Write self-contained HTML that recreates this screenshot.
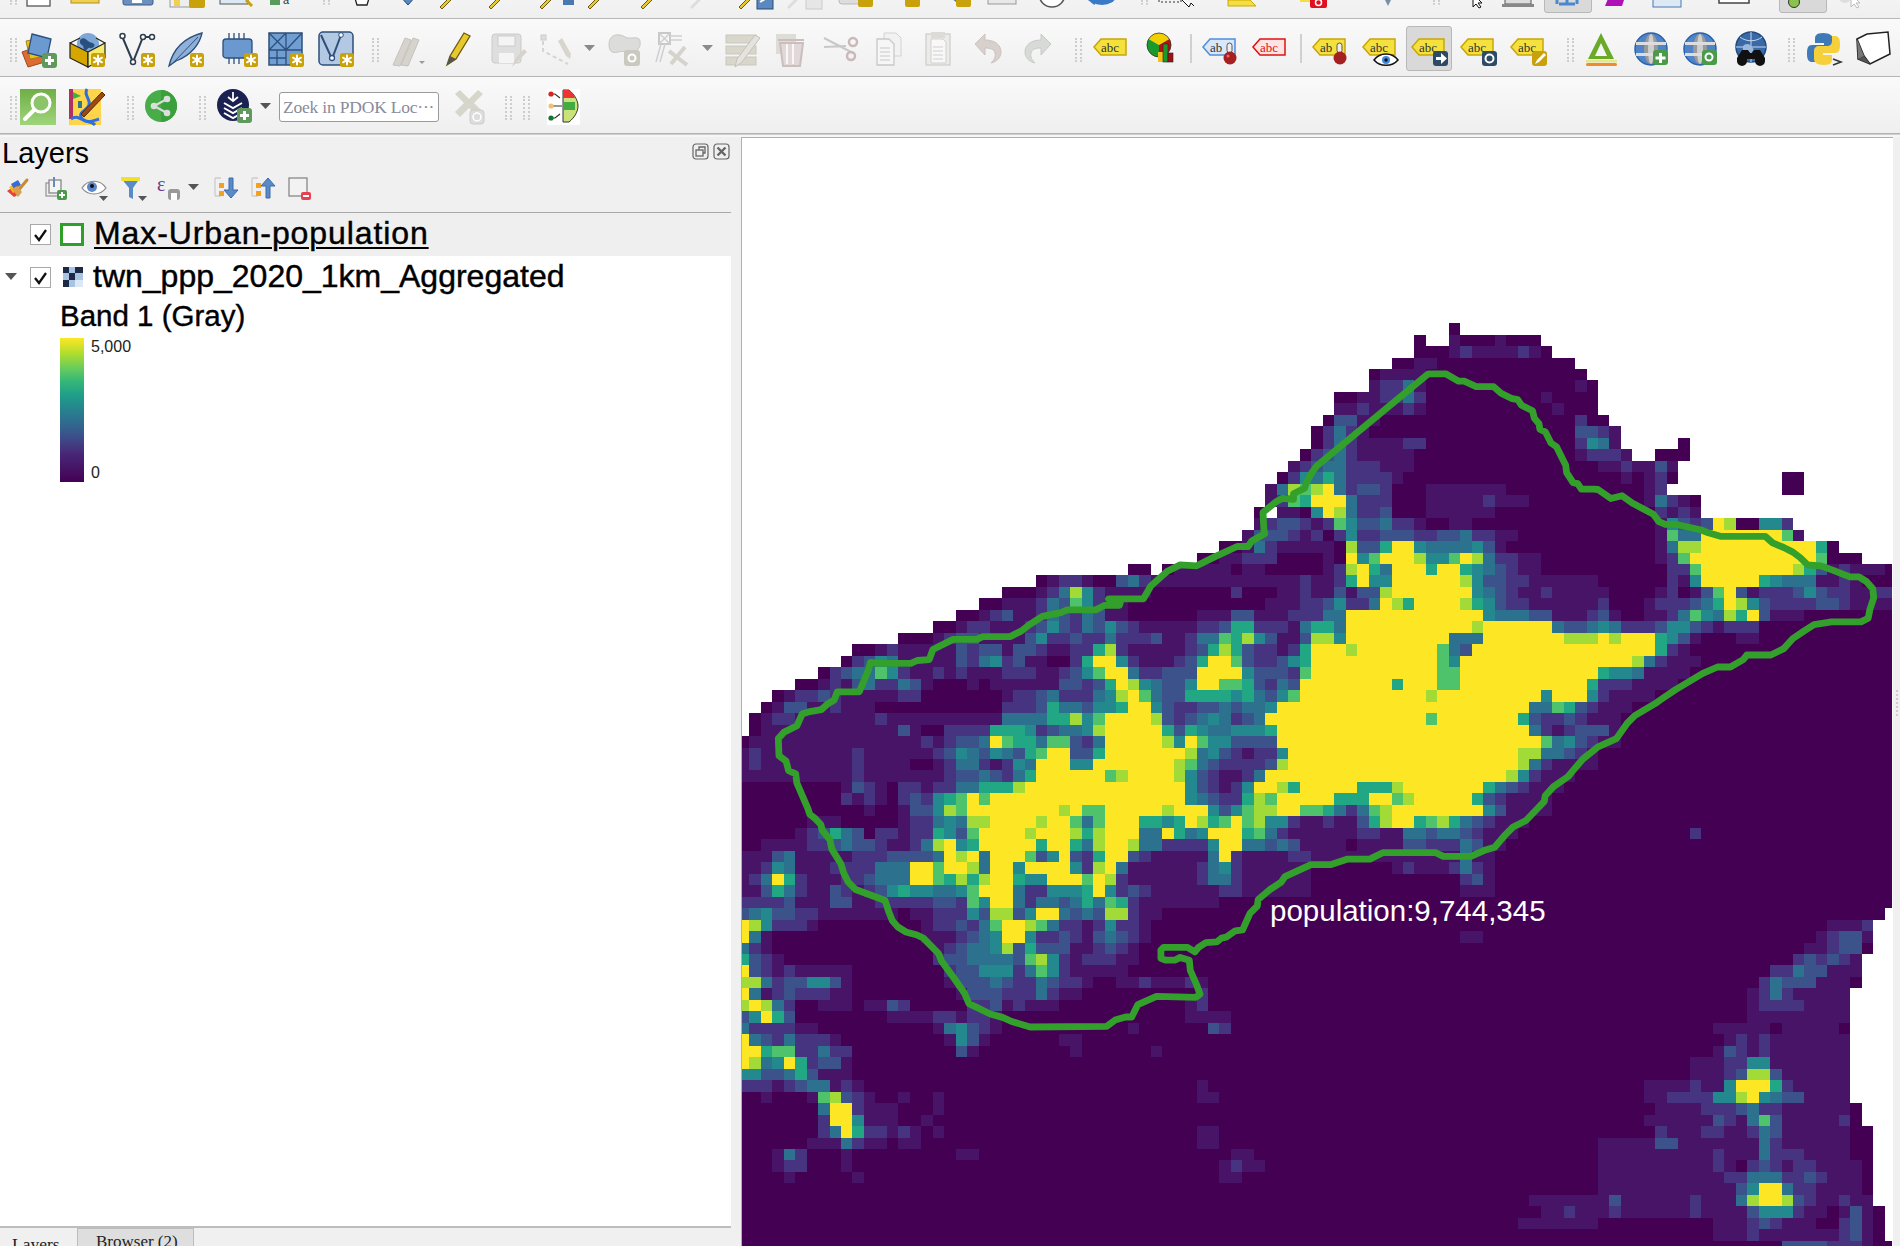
<!DOCTYPE html>
<html><head><meta charset="utf-8">
<style>
html,body{margin:0;padding:0;}
body{width:1900px;height:1246px;overflow:hidden;background:#f0f0f0;position:relative;font-family:"Liberation Sans",sans-serif;}
.abs{position:absolute;}
.tb{position:absolute;left:0;width:1900px;background:linear-gradient(#f7f7f7,#eeeeee);}
.hl{position:absolute;left:0;width:1900px;height:2px;background:#c9c9c9;}
.grip{position:absolute;width:7px;border-left:2px dotted #cdcdcd;border-right:2px dotted #cdcdcd;box-sizing:border-box;}
svg{position:absolute;overflow:visible;}
</style></head><body>
<!-- toolbars -->
<div class="tb" style="top:0;height:18px;background:linear-gradient(#f3f3f3,#efefef);"></div>
<div class="hl" style="top:18px;height:1px;background:#b8b8b8;"></div>
<div class="tb" style="top:19px;height:57px;background:linear-gradient(#fafafa,#efefef);"></div>
<div class="hl" style="top:76px;height:1px;background:#b4b4b4;"></div>
<div class="tb" style="top:77px;height:56px;background:linear-gradient(#fafafa,#efefef);"></div>
<div class="hl" style="top:133px;height:1px;background:#b2b2b2;"></div>
<div class="hl" style="top:134px;height:1px;background:#cfcfcf;"></div>
<div class="grip" style="left:10px;top:38px;height:24px;"></div>
<svg style="left:20px;top:31px" width="38" height="37" viewBox="0 0 38 37"><path d="M2 21l17-6 6 16-17 5z" fill="#dd6b32" stroke="#9a4a20" stroke-width="1"/><path d="M6 10l16-3 4 18-16 3z" fill="#f0c020" stroke="#a68410" stroke-width="1"/><path d="M12 3l19 5-4 19-19-5z" fill="#6b9ad0" stroke="#2d4f7e" stroke-width="1.3"/><g transform="translate(22,22)"><rect x="0" y="0" width="15" height="15" rx="3" fill="#5f9a5c"/><path d="M7.5 3v9M3 7.5h9" stroke="#fff" stroke-width="3"/></g></svg>
<svg style="left:69px;top:31px" width="38" height="37" viewBox="0 0 38 37"><circle cx="19" cy="13" r="11" fill="#7ea6d6"/><path d="M12 8c3-2 5 0 7 2s4 1 6 3-2 5-4 4-3 3-5 2-1-4-3-5-3-4-1-6z" fill="#27507e"/><path d="M1 12l18 9v15L1 27z" fill="#d6a600" stroke="#222" stroke-width="1.2"/><path d="M19 21l17-9v15l-17 9z" fill="#f6ec6a" stroke="#222" stroke-width="1.2"/><path d="M1 12l10-5M36 12l-9-5" stroke="#222" stroke-width="1.2"/><g transform="translate(22,22)"><rect x="0" y="0" width="14" height="14" rx="2.5" fill="#c9a10a"/><g stroke="#fff" stroke-width="2" stroke-linecap="round"><line x1="7" y1="2.5" x2="7" y2="11.5"/><line x1="3" y1="4.7" x2="11" y2="9.3"/><line x1="3" y1="9.3" x2="11" y2="4.7"/></g></g></svg>
<svg style="left:119px;top:31px" width="38" height="37" viewBox="0 0 38 37"><path d="M3 5l11 26L24 6h10" fill="none" stroke="#2e3d4f" stroke-width="2"/><circle cx="3.5" cy="5" r="2.5" fill="#fff" stroke="#2e3d4f" stroke-width="1.5"/><circle cx="14" cy="31" r="2.5" fill="#fff" stroke="#2e3d4f" stroke-width="1.5"/><circle cx="24" cy="6" r="2.5" fill="#fff" stroke="#2e3d4f" stroke-width="1.5"/><circle cx="33" cy="6" r="2.5" fill="#fff" stroke="#2e3d4f" stroke-width="1.5"/><g transform="translate(22,22)"><rect x="0" y="0" width="14" height="14" rx="2.5" fill="#c9a10a"/><g stroke="#fff" stroke-width="2" stroke-linecap="round"><line x1="7" y1="2.5" x2="7" y2="11.5"/><line x1="3" y1="4.7" x2="11" y2="9.3"/><line x1="3" y1="9.3" x2="11" y2="4.7"/></g></g></svg>
<svg style="left:168px;top:31px" width="38" height="37" viewBox="0 0 38 37"><path d="M1 35C4 22 12 8 34 2c-2 10-10 22-26 28z" fill="#8fb0d8" stroke="#2e4f7a" stroke-width="1.3"/><path d="M4 33L30 6" stroke="#2e4f7a" stroke-width="1"/><g transform="translate(22,22)"><rect x="0" y="0" width="14" height="14" rx="2.5" fill="#c9a10a"/><g stroke="#fff" stroke-width="2" stroke-linecap="round"><line x1="7" y1="2.5" x2="7" y2="11.5"/><line x1="3" y1="4.7" x2="11" y2="9.3"/><line x1="3" y1="9.3" x2="11" y2="4.7"/></g></g></svg>
<svg style="left:222px;top:31px" width="38" height="37" viewBox="0 0 38 37"><rect x="1" y="8" width="29" height="19" rx="3" fill="#6a98cf" stroke="#2e4f7a" stroke-width="1.3"/><path d="M7 2v6M12 2v6M17 2v6M22 2v6M7 27v6M12 27v6M17 27v6" stroke="#2e4f7a" stroke-width="1.3"/><g transform="translate(22,22)"><rect x="0" y="0" width="14" height="14" rx="2.5" fill="#c9a10a"/><g stroke="#fff" stroke-width="2" stroke-linecap="round"><line x1="7" y1="2.5" x2="7" y2="11.5"/><line x1="3" y1="4.7" x2="11" y2="9.3"/><line x1="3" y1="9.3" x2="11" y2="4.7"/></g></g></svg>
<svg style="left:268px;top:31px" width="38" height="37" viewBox="0 0 38 37"><rect x="1" y="2" width="33" height="32" fill="#6f9ed3" stroke="#2e4f7a" stroke-width="1.5"/><path d="M1 19h33M18 2v32M1 27h17M9 19v15M1 2l17 17M18 2L1 19M34 2L18 19" stroke="#2e4f7a" stroke-width="1.3" fill="none"/><g transform="translate(22,22)"><rect x="0" y="0" width="14" height="14" rx="2.5" fill="#c9a10a"/><g stroke="#fff" stroke-width="2" stroke-linecap="round"><line x1="7" y1="2.5" x2="7" y2="11.5"/><line x1="3" y1="4.7" x2="11" y2="9.3"/><line x1="3" y1="9.3" x2="11" y2="4.7"/></g></g></svg>
<svg style="left:318px;top:31px" width="38" height="37" viewBox="0 0 38 37"><rect x="1" y="1" width="34" height="33" rx="4" fill="#b3c8e3" stroke="#2e4f7a" stroke-width="1.5"/><path d="M3 4l11 24L23 4" fill="none" stroke="#2e4f7a" stroke-width="2"/><circle cx="14" cy="27" r="2.5" fill="#fff" stroke="#2e4f7a" stroke-width="1.3"/><circle cx="23" cy="4" r="2.3" fill="#fff" stroke="#2e4f7a"/><g transform="translate(22,22)"><rect x="0" y="0" width="14" height="14" rx="2.5" fill="#c9a10a"/><g stroke="#fff" stroke-width="2" stroke-linecap="round"><line x1="7" y1="2.5" x2="7" y2="11.5"/><line x1="3" y1="4.7" x2="11" y2="9.3"/><line x1="3" y1="9.3" x2="11" y2="4.7"/></g></g></svg>
<div class="grip" style="left:372px;top:38px;height:24px;"></div>
<svg style="left:391px;top:31px" width="40" height="37" viewBox="0 0 40 37"><path d="M2 34l12-27 6 2-11 26z" fill="#d6d2cc" stroke="#c6c2bc"/><path d="M10 34l12-27 6 2-11 26z" fill="#d6d2cc" stroke="#c6c2bc"/><path d="M28 30l6 0-3 3z" fill="#999"/></svg>
<svg style="left:445px;top:31px" width="28" height="37" viewBox="0 0 28 37"><path d="M2 34l3-9L19 2l6 3-14 23z" fill="#e6c92c" stroke="#6d5a10" stroke-width="1.3"/><path d="M2 34l3-9 6 3z" fill="#555"/></svg>
<svg style="left:491px;top:31px" width="36" height="37" viewBox="0 0 36 37"><rect x="1" y="3" width="29" height="29" rx="3" fill="#dedede" stroke="#cacaca"/><rect x="7" y="5" width="17" height="10" fill="#f4f4f4" stroke="#ccc"/><rect x="8" y="22" width="15" height="10" fill="#f4f4f4"/><path d="M21 36l3-8 9-10 3 3-10 10z" fill="#d8d2cc"/></svg>
<svg style="left:540px;top:31px" width="36" height="37" viewBox="0 0 36 37"><rect x="1" y="4" width="5" height="5" fill="#ddd" stroke="#ccc"/><path d="M3 10v10l25 13" fill="none" stroke="#d4d4d4" stroke-width="2" stroke-dasharray="4 3"/><path d="M18 10l4-3 9 16-1 5-4-3z" fill="#d8d6cc"/></svg>
<svg style="left:584px;top:44px" width="12" height="8" viewBox="0 0 12 8"><path d="M0 1h11l-5.5 6z" fill="#8a8a8a"/></svg>
<svg style="left:606px;top:31px" width="38" height="37" viewBox="0 0 38 37"><path d="M3 13c0-10 10-11 16-7 5 3 14-2 15 4s-2 9-6 11-9-2-16 0-9-2-9-8z" fill="#dcdcda" stroke="#c8c8c6"/><rect x="18" y="19" width="16" height="16" rx="3" fill="#cbc8c0"/><circle cx="26" cy="27" r="3.5" fill="none" stroke="#fff" stroke-width="2"/></svg>
<svg style="left:655px;top:31px" width="38" height="37" viewBox="0 0 38 37"><rect x="4" y="2" width="11" height="11" fill="none" stroke="#c8c8c8" stroke-width="2"/><path d="M4 2l11 11M15 2L4 13M15 5h12M15 9h12M6 13L1 31M10 13L5 31" stroke="#cfcfcf" stroke-width="1.5"/><path d="M14 20l18 14M30 16L16 33" stroke="#d6d2cc" stroke-width="4"/></svg>
<svg style="left:702px;top:44px" width="12" height="8" viewBox="0 0 12 8"><path d="M0 1h11l-5.5 6z" fill="#8a8a8a"/></svg>
<svg style="left:725px;top:31px" width="38" height="37" viewBox="0 0 38 37"><rect x="1" y="4" width="30" height="8" fill="#d9d7cc" stroke="#c9c7bc"/><rect x="1" y="15" width="30" height="8" fill="#d9d7cc" stroke="#c9c7bc"/><rect x="1" y="26" width="30" height="8" fill="#d9d7cc" stroke="#c9c7bc"/><path d="M10 36l2-8 18-24 5 3-18 24z" fill="#e6e2de" stroke="#c4c0bb"/></svg>
<svg style="left:775px;top:31px" width="32" height="37" viewBox="0 0 32 37"><rect x="1" y="3" width="20" height="20" fill="#dedcd6"/><path d="M3 9h26M5 12l3 23h17l3-23z" fill="#e2d8d8" stroke="#cbbebe" stroke-width="2"/><path d="M12 13v20M18 13v20" stroke="#fff" stroke-width="1.5"/></svg>
<svg style="left:823px;top:31px" width="36" height="37" viewBox="0 0 36 37"><path d="M1 7l29 15M1 16l22-1" stroke="#c8c8c8" stroke-width="2"/><circle cx="30" cy="11" r="4" fill="none" stroke="#cbb8b8" stroke-width="2.5"/><circle cx="28" cy="25" r="4" fill="none" stroke="#cbb8b8" stroke-width="2.5"/></svg>
<svg style="left:876px;top:31px" width="30" height="37" viewBox="0 0 30 37"><path d="M8 2h12l5 5v18H8z" fill="#f2f2f2" stroke="#d2d2d2"/><path d="M1 8h12l5 5v21H1z" fill="#f6f6f6" stroke="#c8c8c8" stroke-width="1.3"/><path d="M4 17h10M4 21h10M4 25h10M4 29h10" stroke="#c8c8c8"/></svg>
<svg style="left:925px;top:31px" width="30" height="37" viewBox="0 0 30 37"><rect x="1" y="3" width="24" height="31" fill="#ecebe8" stroke="#d0cfcb" stroke-width="1.3"/><rect x="6" y="1" width="14" height="6" fill="#dcdbd7"/><path d="M6 8h12l3 3v21H6z" fill="#f8f8f8" stroke="#d0d0d0"/><path d="M8 16h10M8 20h10M8 24h10M8 28h10" stroke="#cfcfcf"/></svg>
<svg style="left:974px;top:31px" width="30" height="37" viewBox="0 0 30 37"><path d="M1 13L11 3v6c10 0 16 5 16 12 0 6-5 10-10 11 3-3 5-6 4-10-1-4-5-5-10-5v7z" fill="#d8d0cc" stroke="#cbc3bf"/></svg>
<svg style="left:1022px;top:31px" width="30" height="37" viewBox="0 0 30 37"><path d="M29 13L19 3v6C9 9 3 14 3 21c0 6 5 10 10 11-3-3-5-6-4-10 1-4 5-5 10-5v7z" fill="#d8dad8" stroke="#c8cac8"/></svg>
<div class="grip" style="left:1075px;top:38px;height:24px;"></div>
<svg style="left:1093px;top:31px" width="36" height="37" viewBox="0 0 36 37"><g transform="translate(1,7)"><path d="M0 9L7 1h25v16H7z" fill="#f5e13c" stroke="#c9a50c" stroke-width="1.5"/><text x="7" y="14" font-family="Liberation Serif" font-size="13" fill="#333">abc</text></g></svg>
<svg style="left:1145px;top:31px" width="34" height="37" viewBox="0 0 34 37"><path d="M14 14L3.6 8A12 12 0 0 1 24.4 8z" fill="#f2d000"/><path d="M14 14L24.4 8A12 12 0 0 1 14 26z" fill="#b80f0f"/><path d="M14 14L14 26A12 12 0 0 1 3.6 8z" fill="#1a9a2a"/><circle cx="14" cy="14" r="12" fill="none" stroke="#333" stroke-width="0.8"/><rect x="13" y="21" width="5" height="10" fill="#f2c218"/><rect x="18" y="13" width="5" height="18" fill="#1a9a2a" stroke="#222" stroke-width="0.6"/><rect x="23" y="22" width="5" height="9" fill="#a0110f" stroke="#222" stroke-width="0.6"/></svg>
<div class="abs" style="left:1190px;top:34px;width:2px;height:29px;background:#d0d0d0"></div>
<svg style="left:1202px;top:31px" width="40" height="37" viewBox="0 0 40 37"><g transform="translate(1,7)"><path d="M0 9L7 1h25v16H7z" fill="#d9e7f8" stroke="#4d8fdc" stroke-width="1.5"/><text x="7" y="14" font-family="Liberation Serif" font-size="13" fill="#333">ab</text></g><rect x="25" y="12" width="5" height="10" rx="2.5" fill="#eee" stroke="#555"/><circle cx="28" cy="27" r="6.5" fill="#a52020"/><circle cx="26" cy="25" r="1.5" fill="#e66"/></svg>
<svg style="left:1252px;top:31px" width="36" height="37" viewBox="0 0 36 37"><g transform="translate(1,7)"><path d="M0 9L7 1h25v16H7z" fill="#fde3e3" stroke="#e01010" stroke-width="1.5"/><text x="7" y="14" font-family="Liberation Serif" font-size="13" fill="#e01010">abc</text></g></svg>
<div class="abs" style="left:1300px;top:34px;width:2px;height:29px;background:#d0d0d0"></div>
<svg style="left:1312px;top:31px" width="40" height="37" viewBox="0 0 40 37"><g transform="translate(1,7)"><path d="M0 9L7 1h25v16H7z" fill="#f5e13c" stroke="#c9a50c" stroke-width="1.5"/><text x="7" y="14" font-family="Liberation Serif" font-size="13" fill="#333">ab</text></g><rect x="25" y="12" width="5" height="10" rx="2.5" fill="#eee" stroke="#555"/><circle cx="28" cy="27" r="6.5" fill="#a52020"/></svg>
<svg style="left:1362px;top:31px" width="40" height="37" viewBox="0 0 40 37"><g transform="translate(1,7)"><path d="M0 9L7 1h25v16H7z" fill="#f5e13c" stroke="#c9a50c" stroke-width="1.5"/><text x="7" y="14" font-family="Liberation Serif" font-size="13" fill="#333">abc</text></g><path d="M12 29c6-8 18-8 24 0-6 7-18 7-24 0z" fill="#fff" stroke="#111" stroke-width="1.5"/><circle cx="24" cy="29" r="4" fill="#3e8be0"/><circle cx="24" cy="29" r="1.7" fill="#111"/></svg>
<div class="abs" style="left:1406px;top:26px;width:46px;height:45px;background:#d9d9d9;border:1px solid #b8b8b8;border-radius:3px;box-sizing:border-box"></div>
<svg style="left:1411px;top:31px" width="40" height="37" viewBox="0 0 40 37"><g transform="translate(1,7)"><path d="M0 9L7 1h25v16H7z" fill="#f5e13c" stroke="#c9a50c" stroke-width="1.5"/><text x="7" y="14" font-family="Liberation Serif" font-size="13" fill="#333">abc</text></g><rect x="22" y="20" width="15" height="15" rx="3" fill="#2d4b66"/><path d="M25 26h5v-4l6 5.5-6 5.5v-4h-5z" fill="#fff"/></svg>
<svg style="left:1460px;top:31px" width="40" height="37" viewBox="0 0 40 37"><g transform="translate(1,7)"><path d="M0 9L7 1h25v16H7z" fill="#f5e13c" stroke="#c9a50c" stroke-width="1.5"/><text x="7" y="14" font-family="Liberation Serif" font-size="13" fill="#333">abc</text></g><rect x="22" y="20" width="15" height="15" rx="3" fill="#2d4b66"/><circle cx="29.5" cy="27.5" r="4" fill="none" stroke="#fff" stroke-width="2"/></svg>
<svg style="left:1510px;top:31px" width="40" height="37" viewBox="0 0 40 37"><g transform="translate(1,7)"><path d="M0 9L7 1h25v16H7z" fill="#f5e13c" stroke="#c9a50c" stroke-width="1.5"/><text x="7" y="14" font-family="Liberation Serif" font-size="13" fill="#333">abc</text></g><rect x="22" y="20" width="15" height="15" rx="3" fill="#c9a10a"/><path d="M25 33l2-4 7-7 2 2-7 7z" fill="#fff"/></svg>
<div class="grip" style="left:1567px;top:38px;height:24px;"></div>
<svg style="left:1584px;top:31px" width="36" height="37" viewBox="0 0 36 37"><path d="M17 2L4 28h26z" fill="#6aaa28"/><path d="M17 12l-6 13h12z" fill="#f5f5f5"/><rect x="2" y="29" width="31" height="2.5" fill="#e4e88a"/><rect x="2" y="32" width="31" height="3" rx="1.5" fill="#ef8a30"/></svg>
<svg style="left:1633px;top:31px" width="40" height="37" viewBox="0 0 40 37"><g transform="translate(1,1)"><circle cx="17" cy="17" r="16" fill="#4f84c8" stroke="#2a62aa" stroke-width="1.5"/><ellipse cx="17" cy="17" rx="7" ry="15" fill="#9a9a9a"/><ellipse cx="17" cy="17" rx="3" ry="15" fill="#cfcfcf"/><rect x="2" y="10" width="30" height="3" fill="#ddd"/><rect x="2" y="21" width="30" height="3" fill="#ddd"/></g><rect x="20" y="19" width="15" height="15" rx="3" fill="#4a9a4a"/><path d="M27.5 22v10M22.5 27h10" stroke="#fff" stroke-width="3"/></svg>
<svg style="left:1682px;top:31px" width="40" height="37" viewBox="0 0 40 37"><g transform="translate(1,1)"><circle cx="17" cy="17" r="16" fill="#4f84c8" stroke="#2a62aa" stroke-width="1.5"/><ellipse cx="17" cy="17" rx="7" ry="15" fill="#9a9a9a"/><ellipse cx="17" cy="17" rx="3" ry="15" fill="#cfcfcf"/><rect x="2" y="10" width="30" height="3" fill="#ddd"/><rect x="2" y="21" width="30" height="3" fill="#ddd"/></g><rect x="20" y="19" width="15" height="15" rx="3" fill="#4a9a4a"/><circle cx="27" cy="26" r="3.5" fill="none" stroke="#fff" stroke-width="2"/></svg>
<svg style="left:1732px;top:31px" width="40" height="37" viewBox="0 0 40 37"><circle cx="19" cy="16" r="15" fill="#3a69a8" stroke="#1f4a80" stroke-width="1.5"/><path d="M4 16h30M19 1v30M8 6c6 5 16 5 22 0M8 26c6-5 16-5 22 0" fill="none" stroke="#c8d8ec" stroke-width="1"/><path d="M12 14c3-2 6-1 7 1s4 3 2 5-5 0-6 2-4-1-4-3-1-3 1-5z" fill="#9ab8de"/><path d="M5 27l5-8h6l2 3h2l2-3h6l5 8v3a5 5 0 0 1-10 0v-2h-8v2a5 5 0 0 1-10 0z" fill="#111"/></svg>
<div class="grip" style="left:1788px;top:38px;height:24px;"></div>
<svg style="left:1807px;top:31px" width="36" height="37" viewBox="0 0 36 37"><path d="M16 2c-7 0-8 3-8 6v4h9v2H5c-4 0-5 3-5 9s2 8 5 8h3v-5c0-3 2-5 5-5h8c3 0 5-2 5-5V8c0-3-3-6-10-6z" fill="#3f7ab8"/><path d="M17 34c7 0 8-3 8-6v-4h-9v-2h12c4 0 5-3 5-9s-2-8-5-8h-3v5c0 3-2 5-5 5h-8c-3 0-5 2-5 5v8c0 3 3 6 10 6z" fill="#f5d03a"/><path d="M26 28l8 3-8 3" fill="none" stroke="#333" stroke-width="1.5"/></svg>
<svg style="left:1856px;top:31px" width="36" height="37" viewBox="0 0 36 37"><path d="M11 3l21-2 2 22-20 10-12-5 -1-20z" fill="#fff" stroke="#222" stroke-width="1.5"/><path d="M1 8l7 17 6 8M8 25l-6 3" fill="none" stroke="#222" stroke-width="1.5"/><path d="M1 8l7 17-6 3z" fill="#777"/><path d="M8 25l6 8-12-5z" fill="#555"/></svg>
<div class="grip" style="left:10px;top:96px;height:24px;"></div>
<svg style="left:20px;top:88px" width="37" height="37" viewBox="0 0 37 37"><defs><linearGradient id="gs" x1="0" y1="0" x2="0" y2="1"><stop offset="0" stop-color="#6fae47"/><stop offset="1" stop-color="#9fd57a"/></linearGradient></defs><rect x="0" y="1" width="36" height="36" fill="url(#gs)"/><circle cx="21" cy="15" r="9" fill="#8cc46a" stroke="#fff" stroke-width="3"/><path d="M14 22L5 31" stroke="#fff" stroke-width="4" stroke-linecap="round"/></svg>
<svg style="left:69px;top:88px" width="37" height="37" viewBox="0 0 37 37"><rect x="0" y="1" width="32" height="36" fill="#fdd44a"/><path d="M0 1h4v30H0z" fill="#b03060"/><path d="M18 1c-4 6 4 10 2 16s-10 6-8 12 10 3 14 8" fill="none" stroke="#2d6ee0" stroke-width="3"/><path d="M2 31c6-4 10 0 14 2s8 0 14-2" fill="none" stroke="#2d6ee0" stroke-width="3"/><path d="M4 4l8 4-8 3z" fill="#3cb043"/><rect x="9" y="13" width="4" height="7" fill="#2a7a8a"/><path d="M12 26L33 4l3 3-21 22z" fill="#9b4a12" stroke="#5a2a05"/></svg>
<div class="grip" style="left:127px;top:96px;height:24px;"></div>
<svg style="left:145px;top:88px" width="34" height="37" viewBox="0 0 34 37"><circle cx="16" cy="18" r="16" fill="#46ad48"/><path d="M16 2a16 16 0 0 1 0 32z" fill="#3aa03c"/><circle cx="22" cy="11" r="3.3" fill="#ddd"/><circle cx="9" cy="18" r="3.3" fill="#ddd"/><circle cx="22" cy="25" r="3.3" fill="#ddd"/><path d="M22 11L9 18l13 7" fill="none" stroke="#ddd" stroke-width="2"/></svg>
<div class="grip" style="left:199px;top:96px;height:24px;"></div>
<svg style="left:217px;top:88px" width="38" height="38" viewBox="0 0 38 38"><circle cx="16" cy="17" r="16" fill="#1b2151"/><path d="M16 4v8M11 9l5 4 5-4" fill="none" stroke="#fff" stroke-width="1.8"/><path d="M7 15l9 5 9-5M7 20l9 5 9-5M7 25l9 5 9-5" fill="none" stroke="#fff" stroke-width="2"/><g transform="translate(20,20)"><rect x="0" y="0" width="15" height="15" rx="3" fill="#5f9a5c"/><path d="M7.5 3v9M3 7.5h9" stroke="#fff" stroke-width="3"/></g></svg>
<svg style="left:260px;top:102px" width="12" height="8" viewBox="0 0 12 8"><path d="M0 1h11l-5.5 6z" fill="#555"/></svg>
<div class="abs" style="left:279px;top:92px;width:160px;height:30px;background:#fff;border:1px solid #9a9a9a;border-radius:3px;box-sizing:border-box;font-family:'Liberation Serif',serif;font-size:17.5px;color:#8a8a9a;line-height:28px;padding-left:3px;letter-spacing:-0.2px;white-space:nowrap;overflow:hidden">Zoek in PDOK Loc···</div>
<svg style="left:452px;top:88px" width="34" height="37" viewBox="0 0 34 37"><path d="M3 6l5-4 9 9 9-9 5 4-9 9 9 9-5 5-9-9-9 9-5-5 9-9z" fill="#d6d6cb"/><rect x="18" y="22" width="14" height="14" rx="3" fill="#ddd" stroke="#cfcaca"/><circle cx="25" cy="29" r="4" fill="none" stroke="#fff" stroke-width="1.5"/></svg>
<div class="grip" style="left:505px;top:96px;height:24px;"></div>
<div class="grip" style="left:523px;top:96px;height:24px;"></div>
<svg style="left:547px;top:88px" width="34" height="37" viewBox="0 0 34 37"><rect x="0" y="1" width="33" height="36" fill="#fff"/><path d="M3 6h5l5 4M3 18h12M3 30h5l5-4" stroke="#333" stroke-width="1.2" fill="none"/><circle cx="4" cy="6" r="2.6" fill="#d22"/><circle cx="4" cy="18" r="2.6" fill="#f4c070"/><circle cx="4" cy="30" r="2.6" fill="#173"/><path d="M16 2h6c5 4 9 10 9 16s-4 12-9 16h-6z" fill="#c9e27a" stroke="#333"/><path d="M16 2h6c3 2 5 5 6 8H16z" fill="#e33"/><path d="M16 14h12v8H16z" fill="#4a4"/></svg>
<div class="grip" style="left:10px;top:0px;height:5px;"></div>
<svg style="left:26px;top:0px" width="26" height="18" viewBox="0 0 26 18"><rect x="1" y="-6" width="23" height="12" fill="#fff" stroke="#555" stroke-width="1.3"/></svg>
<svg style="left:70px;top:0px" width="30" height="18" viewBox="0 0 30 18"><rect x="1" y="-6" width="28" height="9" fill="#f0d050" stroke="#b09020"/></svg>
<svg style="left:122px;top:0px" width="32" height="18" viewBox="0 0 32 18"><rect x="1" y="-8" width="30" height="13" rx="2" fill="#6b90c0" stroke="#3a5a88"/><rect x="10" y="-2" width="10" height="5" fill="#fff"/></svg>
<svg style="left:170px;top:0px" width="36" height="18" viewBox="0 0 36 18"><rect x="0" y="-6" width="24" height="13" fill="#eee" stroke="#999"/><rect x="4" y="-2" width="6" height="8" fill="#f0d050"/><rect x="19" y="-3" width="16" height="11" rx="2" fill="#c9a10a"/></svg>
<svg style="left:220px;top:0px" width="34" height="18" viewBox="0 0 34 18"><rect x="0" y="-6" width="28" height="10" fill="#dde8f5" stroke="#555"/><path d="M26 0l6 6" stroke="#c9a10a" stroke-width="3"/></svg>
<svg style="left:269px;top:0px" width="30" height="18" viewBox="0 0 30 18"><rect x="1" y="-6" width="10" height="11" fill="#5a9a5a"/><text x="14" y="4" font-size="11" font-family="Liberation Sans" fill="#333">a</text></svg>
<div class="grip" style="left:323px;top:0px;height:5px;"></div>
<svg style="left:352px;top:0px" width="20" height="18" viewBox="0 0 20 18"><path d="M2-5h16l-3 10H5z" fill="#fff" stroke="#222" stroke-width="1.3"/></svg>
<svg style="left:399px;top:0px" width="20" height="18" viewBox="0 0 20 18"><path d="M1-4l8 9 8-9z" fill="#5a88c0" stroke="#2a4a70"/></svg>
<svg style="left:439px;top:0px" width="16" height="18" viewBox="0 0 16 18"><path d="M1 7L13-5l2 2L3 9z" fill="#e6c92c" stroke="#6d5a10"/></svg>
<svg style="left:488px;top:0px" width="16" height="18" viewBox="0 0 16 18"><path d="M1 7L13-5l2 2L3 9z" fill="#e6c92c" stroke="#6d5a10"/></svg>
<svg style="left:539px;top:0px" width="16" height="18" viewBox="0 0 16 18"><path d="M1 7L13-5l2 2L3 9z" fill="#e6c92c" stroke="#6d5a10"/></svg>
<svg style="left:587px;top:0px" width="16" height="18" viewBox="0 0 16 18"><path d="M1 7L13-5l2 2L3 9z" fill="#e6c92c" stroke="#6d5a10"/></svg>
<svg style="left:640px;top:0px" width="16" height="18" viewBox="0 0 16 18"><path d="M1 7L13-5l2 2L3 9z" fill="#e6c92c" stroke="#6d5a10"/></svg>
<svg style="left:738px;top:0px" width="16" height="18" viewBox="0 0 16 18"><path d="M1 7L13-5l2 2L3 9z" fill="#e6c92c" stroke="#6d5a10"/></svg>
<svg style="left:562px;top:0px" width="14" height="18" viewBox="0 0 14 18"><rect x="1" y="-6" width="11" height="11" fill="#4a78b0"/></svg>
<svg style="left:689px;top:0px" width="14" height="18" viewBox="0 0 14 18"><path d="M1 7L12-4l2 2L3 9z" fill="#ddd"/></svg>
<svg style="left:756px;top:0px" width="18" height="18" viewBox="0 0 18 18"><rect x="1" y="-6" width="16" height="15" fill="#5a88c0" stroke="#2a4a70"/><path d="M4 2l10-6" stroke="#fff" stroke-width="2"/></svg>
<svg style="left:786px;top:0px" width="14" height="18" viewBox="0 0 14 18"><path d="M1 7L12-4l2 2L3 9z" fill="#ddd"/></svg>
<svg style="left:805px;top:0px" width="18" height="18" viewBox="0 0 18 18"><rect x="1" y="-6" width="16" height="15" fill="#e6e6e6" stroke="#ccc"/></svg>
<svg style="left:839px;top:0px" width="34" height="18" viewBox="0 0 34 18"><rect x="0" y="-8" width="26" height="12" rx="3" fill="#ddd" stroke="#bbb"/><rect x="19" y="-3" width="15" height="10" rx="2" fill="#c9a10a"/></svg>
<svg style="left:904px;top:0px" width="18" height="18" viewBox="0 0 18 18"><rect x="1" y="-3" width="15" height="10" rx="2" fill="#c9a10a"/></svg>
<svg style="left:946px;top:0px" width="26" height="18" viewBox="0 0 26 18"><path d="M0-6l10 8 6-6z" fill="#4a78b0"/><rect x="10" y="-3" width="15" height="10" rx="2" fill="#c9a10a"/></svg>
<svg style="left:987px;top:0px" width="30" height="18" viewBox="0 0 30 18"><rect x="1" y="-8" width="28" height="12" fill="#e8e8e8" stroke="#999"/></svg>
<svg style="left:1037px;top:0px" width="30" height="18" viewBox="0 0 30 18"><circle cx="15" cy="-6" r="13" fill="#fff" stroke="#555" stroke-width="1.5"/></svg>
<svg style="left:1084px;top:0px" width="32" height="18" viewBox="0 0 32 18"><ellipse cx="18" cy="-4" rx="14" ry="9" fill="#3a78c8"/><path d="M1-2c4 0 6 4 10 6" stroke="#3a78c8" stroke-width="2" fill="none"/></svg>
<div class="grip" style="left:1141px;top:0px;height:5px;"></div>
<svg style="left:1158px;top:0px" width="36" height="18" viewBox="0 0 36 18"><rect x="1" y="-6" width="22" height="8" fill="none" stroke="#333" stroke-dasharray="2 2"/><path d="M21-3l10 10 2-4 3 3" fill="#fff" stroke="#111"/></svg>
<svg style="left:1228px;top:0px" width="30" height="18" viewBox="0 0 30 18"><path d="M0 0h22l6 6H0z" fill="#f4de40" stroke="#c9a50c"/></svg>
<svg style="left:1300px;top:0px" width="30" height="18" viewBox="0 0 30 18"><rect x="0" y="-4" width="14" height="6" fill="#f4de40"/><rect x="10" y="-3" width="17" height="11" rx="2" fill="#e01020"/><circle cx="18.5" cy="2.5" r="3" fill="none" stroke="#fff" stroke-width="1.5"/></svg>
<svg style="left:1383px;top:0px" width="12" height="18" viewBox="0 0 12 18"><path d="M0-4h10l-5 10z" fill="#7a90a8"/></svg>
<div class="grip" style="left:1433px;top:0px;height:5px;"></div>
<svg style="left:1472px;top:0px" width="16" height="18" viewBox="0 0 16 18"><path d="M1-6l9 9-4 0 3 4-2 1-3-4-3 3z" fill="#fff" stroke="#111"/></svg>
<svg style="left:1502px;top:0px" width="32" height="18" viewBox="0 0 32 18"><rect x="3" y="-6" width="26" height="10" fill="#ddd" stroke="#555"/><rect x="0" y="4" width="32" height="3" fill="#888"/></svg>
<div class="abs" style="left:1544px;top:-4px;width:48px;height:17px;background:#d9d9d9;border:1px solid #b8b8b8;border-radius:3px;box-sizing:border-box"></div>
<svg style="left:1553px;top:0px" width="28" height="18" viewBox="0 0 28 18"><path d="M4-2v6M14-2v6M24-2v6M6 4h16" stroke="#4a88d0" stroke-width="3"/></svg>
<svg style="left:1605px;top:0px" width="22" height="18" viewBox="0 0 22 18"><path d="M5-6h16l-4 12H0z" fill="#b010b8"/></svg>
<svg style="left:1652px;top:0px" width="30" height="18" viewBox="0 0 30 18"><rect x="1" y="-6" width="28" height="13" fill="#dde8f5" stroke="#4a78b0"/></svg>
<svg style="left:1718px;top:0px" width="32" height="18" viewBox="0 0 32 18"><rect x="1" y="-6" width="30" height="9" fill="#fff" stroke="#444" stroke-width="1.5"/></svg>
<div class="abs" style="left:1779px;top:-4px;width:48px;height:17px;background:#d9d9d9;border:1px solid #b8b8b8;border-radius:3px;box-sizing:border-box"></div>
<svg style="left:1787px;top:0px" width="14" height="18" viewBox="0 0 14 18"><circle cx="7" cy="2" r="5.5" fill="#8bc34a" stroke="#333"/></svg>
<svg style="left:1839px;top:0px" width="28" height="18" viewBox="0 0 28 18"><circle cx="6" cy="-3" r="6" fill="#ddd"/><path d="M12-6l9 9-4 0 3 4-2 1-3-4-3 3z" fill="#fff" stroke="#bbb"/></svg>
<!-- layers panel -->
<div class="abs" style="left:0;top:135px;width:741px;height:1111px;background:#f0f0f0;"></div><div class="abs" style="left:0;top:135px;width:1900px;height:2px;background:#f6f6f6;"></div>
<div class="abs" style="left:2px;top:133px;font-size:29px;color:#000;line-height:40px;">Layers</div>
<svg style="left:692px;top:143px" width="17" height="17" viewBox="0 0 17 17"><rect x="1" y="1" width="15" height="15" rx="3" fill="none" stroke="#666" stroke-width="1.2"/><rect x="4" y="7" width="7" height="6" fill="none" stroke="#666" stroke-width="1.3"/><path d="M7 7V4h6v6h-2" fill="none" stroke="#666" stroke-width="1.3"/></svg>
<svg style="left:713px;top:143px" width="17" height="17" viewBox="0 0 17 17"><rect x="1" y="1" width="15" height="15" rx="3" fill="none" stroke="#666" stroke-width="1.2"/><path d="M4.5 4.5l8 8M12.5 4.5l-8 8" stroke="#666" stroke-width="2.4"/></svg>
<svg style="left:6px;top:176px" width="24" height="24" viewBox="0 0 24 24"><path d="M1 15l9-6 5 8-7 4z" fill="#e8403a"/><path d="M3 11l8-5 4 6-8 5z" fill="#f4c020"/><path d="M5 8l7-4 3 5-7 4z" fill="#3a6ad8"/><path d="M11 16l10-12" stroke="#c98a30" stroke-width="3" stroke-linecap="round"/><path d="M6 13l6 8 4-5-5-6z" fill="#d9a050"/></svg>
<svg style="left:44px;top:176px" width="25" height="25" viewBox="0 0 25 25"><rect x="2" y="7" width="12" height="13" fill="none" stroke="#999" stroke-width="1.3"/><rect x="5" y="4" width="12" height="13" fill="#f4f4f4" stroke="#888" stroke-width="1.3"/><path d="M10 1v10" stroke="#6a8ab8" stroke-width="2"/><rect x="13" y="14" width="10" height="10" rx="2" fill="#4a9a4a"/><path d="M18 16v6M15 19h6" stroke="#fff" stroke-width="2"/></svg>
<svg style="left:81px;top:176px" width="28" height="26" viewBox="0 0 28 26"><path d="M1 12c6-9 18-9 24 0-6 8-18 8-24 0z" fill="#fff" stroke="#888" stroke-width="1.2"/><circle cx="11" cy="11" r="5" fill="#5a88c8"/><circle cx="11" cy="10" r="2" fill="#111"/><path d="M18 20h9l-4.5 5z" fill="#555"/></svg>
<svg style="left:120px;top:176px" width="28" height="26" viewBox="0 0 28 26"><path d="M1 2h19l-7 10v11l-4-2v-9z" fill="#5a8ac8"/><rect x="1" y="1" width="19" height="4" fill="#f0e030"/><path d="M18 20h9l-4.5 5z" fill="#555"/></svg>
<svg style="left:157px;top:176px" width="26" height="25" viewBox="0 0 26 25"><text x="0" y="15" font-family="Liberation Serif" font-size="20" fill="#6a3a8a">&#949;</text><rect x="11" y="13" width="12" height="11" rx="3" fill="#999"/><rect x="14" y="17" width="6" height="7" fill="#fff"/></svg>
<svg style="left:188px;top:183px" width="12" height="8" viewBox="0 0 12 8"><path d="M0 1h11l-5.5 6z" fill="#555"/></svg>
<svg style="left:213px;top:176px" width="24" height="24" viewBox="0 0 24 24"><path d="M2 2h6M2 2v18M2 20h6" stroke="#ccc" stroke-width="1.3" fill="none"/><rect x="6" y="7" width="5" height="5" fill="#f4a020"/><rect x="6" y="15" width="5" height="5" fill="#f4a020"/><path d="M16 2v12h-5l7 8 7-8h-5V2z" fill="#5a8ac8" stroke="#3a6aa8"/></svg>
<svg style="left:250px;top:176px" width="24" height="24" viewBox="0 0 24 24"><path d="M2 2h6M2 2v18M2 20h6" stroke="#ccc" stroke-width="1.3" fill="none"/><rect x="6" y="7" width="5" height="5" fill="#f4a020"/><rect x="6" y="15" width="5" height="5" fill="#f4a020"/><path d="M16 22V10h-5l7-8 7 8h-5v12z" fill="#5a8ac8" stroke="#3a6aa8"/></svg>
<svg style="left:288px;top:176px" width="24" height="25" viewBox="0 0 24 25"><rect x="1" y="2" width="18" height="18" fill="#f2f2f2" stroke="#888" stroke-width="1.3"/><rect x="13" y="16" width="10" height="8" rx="2" fill="#e84050"/><path d="M15 20h6" stroke="#fff" stroke-width="2"/></svg>
<div class="abs" style="left:0;top:212px;width:731px;height:1px;background:#a8a8a8;"></div>
<div class="abs" style="left:0;top:213px;width:731px;height:43px;background:#efefef;"></div>
<div class="abs" style="left:0;top:256px;width:731px;height:971px;background:#fff;"></div>
<div class="abs" style="left:0;top:1226px;width:731px;height:2px;background:#bdbdbd;"></div>
<div class="abs" style="left:30px;top:224px;width:21px;height:21px;background:#fff;border:1.5px solid #a8a8a8;box-sizing:border-box"></div>
<svg style="left:30px;top:224px" width="21" height="21" viewBox="0 0 21 21"><path d="M5 11l4 5 7-10" fill="none" stroke="#111" stroke-width="2.3"/></svg>
<div class="abs" style="left:60px;top:223px;width:24px;height:23px;border:3px solid #2ea02a;box-sizing:border-box;background:#fff"></div>
<div class="abs" style="left:94px;top:213px;font-size:32px;letter-spacing:0.9px;line-height:40px;color:#000;white-space:nowrap;-webkit-text-stroke:0.45px #000;text-decoration:underline;text-decoration-thickness:2px;text-underline-offset:3px">Max-Urban-population</div>
<svg style="left:4px;top:272px" width="14" height="9" viewBox="0 0 14 9"><path d="M1 1h12l-6 7z" fill="#555"/></svg>
<div class="abs" style="left:30px;top:267px;width:21px;height:21px;background:#fff;border:1.5px solid #a8a8a8;box-sizing:border-box"></div>
<svg style="left:30px;top:267px" width="21" height="21" viewBox="0 0 21 21"><path d="M5 11l4 5 7-10" fill="none" stroke="#111" stroke-width="2.3"/></svg>
<svg style="left:63px;top:267px" width="20" height="20" viewBox="0 0 20 20"><rect x="0" y="0" width="20" height="20" fill="#a8c4e4"/><rect x="0" y="0" width="6" height="6" fill="#1e2a44"/><rect x="12" y="0" width="8" height="6" fill="#1e2a44"/><rect x="6" y="6" width="6" height="7" fill="#1e2a44"/><rect x="0" y="13" width="6" height="7" fill="#1e2a44"/><rect x="12" y="13" width="8" height="7" fill="#dce8f4"/></svg>
<div class="abs" style="left:93px;top:256px;font-size:32px;line-height:40px;color:#000;white-space:nowrap;-webkit-text-stroke:0.45px #000">twn_ppp_2020_1km_Aggregated</div>
<div class="abs" style="left:60px;top:298px;font-size:29.5px;line-height:36px;color:#000;white-space:nowrap;-webkit-text-stroke:0.4px #000">Band 1 (Gray)</div>
<div class="abs" style="left:60px;top:338px;width:24px;height:144px;background:linear-gradient(#fde725,#b5de2b 10%,#6ece58 20%,#35b779 30%,#1f9e89 40%,#26828e 50%,#31688e 60%,#3e4a89 70%,#482878 80%,#440154)"></div>
<div class="abs" style="left:91px;top:337px;font-size:16px;line-height:20px;color:#222;white-space:nowrap">5,000</div>
<div class="abs" style="left:91px;top:463px;font-size:16px;line-height:20px;color:#222;white-space:nowrap">0</div>
<div class="abs" style="left:0;top:1228px;width:741px;height:18px;background:#f0f0f0"></div>
<div class="abs" style="left:77px;top:1228px;width:117px;height:20px;background:#dedede;border:1px solid #bdbdbd;box-sizing:border-box"></div>
<div class="abs" style="left:12px;top:1233px;font-family:'Liberation Serif',serif;font-size:17.5px;line-height:22px;color:#222;white-space:nowrap">Layers</div>
<div class="abs" style="left:96px;top:1231px;font-family:'Liberation Serif',serif;font-size:17px;line-height:22px;color:#222;white-space:nowrap">Browser (2)</div>
<!-- map -->
<div class="abs" style="left:741px;top:137px;width:1152px;height:1109px;background:#b0b0b0;"></div>
<div class="abs" style="left:1892px;top:138px;width:1px;height:1108px;background:#fff;"></div>
<div class="grip" style="left:1896px;top:690px;height:26px;width:4px;border-right:none"></div>
<div class="abs" style="left:742px;top:138px;width:1150px;height:1108px;background:#fff;overflow:hidden;">
<svg width="1150" height="1108" viewBox="742 138 1150 1108" style="left:0;top:0" shape-rendering="crispEdges"><path fill="#440154" d="M1448.8 323.1H1460.3V334.6H1448.8zM1414.4 334.6H1425.9V346.0H1414.4zM1448.8 334.6H1540.6V346.0H1448.8zM1414.4 346.0H1552.1V357.5H1414.4zM1391.5 357.5H1575.0V369.0H1391.5zM1368.6 369.0H1586.5V380.4H1368.6zM1368.6 380.4H1598.0V391.9H1368.6zM1334.1 391.9H1598.0V403.4H1334.1zM1334.1 403.4H1598.0V414.9H1334.1zM1322.7 414.9H1609.4V426.3H1322.7zM1311.2 426.3H1620.9V437.8H1311.2zM1311.2 437.8H1620.9V449.3H1311.2zM1678.2 437.8H1689.7V449.3H1678.2zM1299.7 449.3H1632.4V460.7H1299.7zM1655.3 449.3H1689.7V460.7H1655.3zM1288.3 460.7H1678.2V472.2H1288.3zM1276.8 472.2H1678.2V483.7H1276.8zM1781.5 472.2H1804.4V483.7H1781.5zM1265.3 483.7H1666.8V495.1H1265.3zM1781.5 483.7H1804.4V495.1H1781.5zM1265.3 495.1H1701.2V506.6H1265.3zM1253.8 506.6H1265.3V518.1H1253.8zM1276.8 506.6H1701.2V518.1H1276.8zM1253.8 518.1H1792.9V529.6H1253.8zM1242.4 529.6H1804.4V541.0H1242.4zM1219.4 541.0H1838.8V552.5H1219.4zM1196.5 552.5H1861.8V564.0H1196.5zM1127.7 564.0H1150.6V575.4H1127.7zM1162.1 564.0H1896.2V575.4H1162.1zM1035.9 575.4H1896.2V586.9H1035.9zM1001.5 586.9H1896.2V598.4H1001.5zM978.6 598.4H1896.2V609.8H978.6zM955.6 609.8H1896.2V621.3H955.6zM932.7 621.3H1896.2V632.8H932.7zM898.3 632.8H1896.2V644.2H898.3zM852.4 644.2H1896.2V655.7H852.4zM840.9 655.7H1896.2V667.2H840.9zM818.0 667.2H1896.2V678.7H818.0zM795.1 678.7H1896.2V690.1H795.1zM772.1 690.1H1896.2V701.6H772.1zM760.6 701.6H1896.2V713.1H760.6zM749.2 713.1H1896.2V724.5H749.2zM749.2 724.5H1896.2V736.0H749.2zM737.7 736.0H1896.2V747.5H737.7zM737.7 747.5H1896.2V759.0H737.7zM737.7 759.0H1896.2V770.4H737.7zM737.7 770.4H1896.2V781.9H737.7zM737.7 781.9H1896.2V793.4H737.7zM737.7 793.4H1896.2V804.8H737.7zM737.7 804.8H1896.2V816.3H737.7zM737.7 816.3H1896.2V827.8H737.7zM737.7 827.8H1896.2V839.2H737.7zM737.7 839.2H1896.2V850.7H737.7zM737.7 850.7H1896.2V862.2H737.7zM737.7 862.2H1896.2V873.7H737.7zM737.7 873.7H1896.2V885.1H737.7zM737.7 885.1H1896.2V896.6H737.7zM737.7 896.6H1896.2V908.1H737.7zM737.7 908.1H1884.7V919.5H737.7zM737.7 919.5H1873.2V931.0H737.7zM737.7 931.0H1873.2V942.5H737.7zM737.7 942.5H1873.2V953.9H737.7zM737.7 953.9H1861.8V965.4H737.7zM737.7 965.4H1861.8V976.9H737.7zM737.7 976.9H1861.8V988.4H737.7zM737.7 988.4H1850.3V999.8H737.7zM737.7 999.8H1850.3V1011.3H737.7zM737.7 1011.3H1850.3V1022.8H737.7zM737.7 1022.8H1850.3V1034.2H737.7zM737.7 1034.2H1850.3V1045.7H737.7zM737.7 1045.7H1850.3V1057.2H737.7zM737.7 1057.2H1850.3V1068.6H737.7zM737.7 1068.6H1850.3V1080.1H737.7zM737.7 1080.1H1850.3V1091.6H737.7zM737.7 1091.6H1850.3V1103.0H737.7zM737.7 1103.0H1861.8V1114.5H737.7zM737.7 1114.5H1861.8V1126.0H737.7zM737.7 1126.0H1873.2V1137.5H737.7zM737.7 1137.5H1873.2V1148.9H737.7zM737.7 1148.9H1873.2V1160.4H737.7zM737.7 1160.4H1873.2V1171.9H737.7zM737.7 1171.9H1873.2V1183.3H737.7zM737.7 1183.3H1873.2V1194.8H737.7zM737.7 1194.8H1873.2V1206.3H737.7zM737.7 1206.3H1884.7V1217.8H737.7zM737.7 1217.8H1884.7V1229.2H737.7zM737.7 1229.2H1884.7V1240.7H737.7zM737.7 1240.7H1896.2V1252.2H737.7z"/><path fill="#481467" d="M1448.8 334.6H1460.3V346.0H1448.8zM1494.7 334.6H1506.2V346.0H1494.7zM1448.8 346.0H1460.3V357.5H1448.8zM1471.8 346.0H1517.7V357.5H1471.8zM1529.1 346.0H1540.6V357.5H1529.1zM1414.4 357.5H1437.4V369.0H1414.4zM1380.0 369.0H1425.9V380.4H1380.0zM1368.6 380.4H1380.0V391.9H1368.6zM1414.4 380.4H1425.9V391.9H1414.4zM1575.0 380.4H1586.5V391.9H1575.0zM1357.1 391.9H1380.0V403.4H1357.1zM1540.6 391.9H1552.1V403.4H1540.6zM1334.1 403.4H1357.1V414.9H1334.1zM1368.6 403.4H1403.0V414.9H1368.6zM1414.4 403.4H1425.9V414.9H1414.4zM1552.1 403.4H1563.5V414.9H1552.1zM1357.1 414.9H1380.0V426.3H1357.1zM1357.1 426.3H1368.6V437.8H1357.1zM1609.4 426.3H1620.9V437.8H1609.4zM1357.1 437.8H1403.0V449.3H1357.1zM1609.4 437.8H1620.9V449.3H1609.4zM1357.1 449.3H1414.4V460.7H1357.1zM1575.0 449.3H1586.5V460.7H1575.0zM1620.9 449.3H1632.4V460.7H1620.9zM1288.3 460.7H1299.7V472.2H1288.3zM1380.0 460.7H1414.4V472.2H1380.0zM1598.0 460.7H1620.9V472.2H1598.0zM1632.4 460.7H1655.3V472.2H1632.4zM1666.8 460.7H1678.2V472.2H1666.8zM1391.5 472.2H1403.0V483.7H1391.5zM1620.9 472.2H1632.4V483.7H1620.9zM1643.8 472.2H1655.3V483.7H1643.8zM1265.3 483.7H1276.8V495.1H1265.3zM1425.9 483.7H1506.2V495.1H1425.9zM1643.8 483.7H1655.3V495.1H1643.8zM1265.3 495.1H1276.8V506.6H1265.3zM1425.9 495.1H1483.2V506.6H1425.9zM1494.7 495.1H1529.1V506.6H1494.7zM1643.8 495.1H1655.3V506.6H1643.8zM1678.2 495.1H1689.7V506.6H1678.2zM1276.8 506.6H1299.7V518.1H1276.8zM1425.9 506.6H1494.7V518.1H1425.9zM1666.8 506.6H1678.2V518.1H1666.8zM1689.7 506.6H1701.2V518.1H1689.7zM1253.8 518.1H1265.3V529.6H1253.8zM1311.2 518.1H1322.7V529.6H1311.2zM1414.4 518.1H1425.9V529.6H1414.4zM1448.8 518.1H1471.8V529.6H1448.8zM1655.3 518.1H1666.8V529.6H1655.3zM1242.4 529.6H1253.8V541.0H1242.4zM1299.7 529.6H1311.2V541.0H1299.7zM1494.7 529.6H1517.7V541.0H1494.7zM1655.3 529.6H1666.8V541.0H1655.3zM1792.9 529.6H1804.4V541.0H1792.9zM1242.4 541.0H1253.8V552.5H1242.4zM1276.8 541.0H1334.1V552.5H1276.8zM1494.7 541.0H1506.2V552.5H1494.7zM1655.3 541.0H1666.8V552.5H1655.3zM1219.4 552.5H1242.4V564.0H1219.4zM1322.7 552.5H1334.1V564.0H1322.7zM1517.7 552.5H1540.6V564.0H1517.7zM1655.3 552.5H1666.8V564.0H1655.3zM1173.6 564.0H1230.9V575.4H1173.6zM1242.4 564.0H1265.3V575.4H1242.4zM1322.7 564.0H1334.1V575.4H1322.7zM1517.7 564.0H1540.6V575.4H1517.7zM1827.4 564.0H1838.8V575.4H1827.4zM1850.3 564.0H1884.7V575.4H1850.3zM1047.4 575.4H1058.9V586.9H1047.4zM1081.8 575.4H1093.3V586.9H1081.8zM1150.6 575.4H1299.7V586.9H1150.6zM1311.2 575.4H1334.1V586.9H1311.2zM1529.1 575.4H1598.0V586.9H1529.1zM1678.2 575.4H1689.7V586.9H1678.2zM1815.9 575.4H1838.8V586.9H1815.9zM1850.3 575.4H1861.8V586.9H1850.3zM1035.9 586.9H1047.4V598.4H1035.9zM1104.7 586.9H1150.6V598.4H1104.7zM1276.8 586.9H1299.7V598.4H1276.8zM1311.2 586.9H1334.1V598.4H1311.2zM1345.6 586.9H1357.1V598.4H1345.6zM1517.7 586.9H1540.6V598.4H1517.7zM1552.1 586.9H1609.4V598.4H1552.1zM1655.3 586.9H1666.8V598.4H1655.3zM1689.7 586.9H1701.2V598.4H1689.7zM1747.1 586.9H1758.5V598.4H1747.1zM1850.3 586.9H1873.2V598.4H1850.3zM1001.5 598.4H1035.9V609.8H1001.5zM1104.7 598.4H1127.7V609.8H1104.7zM1265.3 598.4H1299.7V609.8H1265.3zM1529.1 598.4H1598.0V609.8H1529.1zM1643.8 598.4H1655.3V609.8H1643.8zM1850.3 598.4H1896.2V609.8H1850.3zM978.6 609.8H990.0V621.3H978.6zM1013.0 609.8H1035.9V621.3H1013.0zM1104.7 609.8H1127.7V621.3H1104.7zM1196.5 609.8H1230.9V621.3H1196.5zM1253.8 609.8H1288.3V621.3H1253.8zM1552.1 609.8H1586.5V621.3H1552.1zM1609.4 609.8H1620.9V621.3H1609.4zM1643.8 609.8H1666.8V621.3H1643.8zM1770.0 609.8H1804.4V621.3H1770.0zM955.6 621.3H967.1V632.8H955.6zM990.0 621.3H1024.5V632.8H990.0zM1139.2 621.3H1196.5V632.8H1139.2zM1288.3 621.3H1299.7V632.8H1288.3zM1712.7 621.3H1724.1V632.8H1712.7zM932.7 632.8H944.2V644.2H932.7zM978.6 632.8H1024.5V644.2H978.6zM1162.1 632.8H1185.0V644.2H1162.1zM1276.8 632.8H1299.7V644.2H1276.8zM1689.7 632.8H1701.2V644.2H1689.7zM1735.6 632.8H1758.5V644.2H1735.6zM875.3 644.2H886.8V655.7H875.3zM898.3 644.2H955.6V655.7H898.3zM1001.5 644.2H1013.0V655.7H1001.5zM1047.4 644.2H1070.3V655.7H1047.4zM1127.7 644.2H1185.0V655.7H1127.7zM1276.8 644.2H1288.3V655.7H1276.8zM1678.2 644.2H1689.7V655.7H1678.2zM898.3 655.7H955.6V667.2H898.3zM1024.5 655.7H1047.4V667.2H1024.5zM1139.2 655.7H1173.6V667.2H1139.2zM1666.8 655.7H1701.2V667.2H1666.8zM909.8 667.2H932.7V678.7H909.8zM944.2 667.2H955.6V678.7H944.2zM967.1 667.2H1001.5V678.7H967.1zM1035.9 667.2H1058.9V678.7H1035.9zM1643.8 667.2H1689.7V678.7H1643.8zM818.0 678.7H829.5V690.1H818.0zM840.9 678.7H852.4V690.1H840.9zM921.2 678.7H932.7V690.1H921.2zM967.1 678.7H978.6V690.1H967.1zM990.0 678.7H1058.9V690.1H990.0zM1632.4 678.7H1678.2V690.1H1632.4zM783.6 690.1H795.1V701.6H783.6zM840.9 690.1H898.3V701.6H840.9zM1001.5 690.1H1013.0V701.6H1001.5zM1609.4 690.1H1655.3V701.6H1609.4zM772.1 701.6H783.6V713.1H772.1zM806.5 701.6H829.5V713.1H806.5zM840.9 701.6H875.3V713.1H840.9zM1598.0 701.6H1632.4V713.1H1598.0zM760.6 713.1H772.1V724.5H760.6zM795.1 713.1H875.3V724.5H795.1zM886.8 713.1H1001.5V724.5H886.8zM1586.5 713.1H1620.9V724.5H1586.5zM760.6 724.5H898.3V736.0H760.6zM909.8 724.5H921.2V736.0H909.8zM1552.1 724.5H1563.5V736.0H1552.1zM1609.4 724.5H1620.9V736.0H1609.4zM749.2 736.0H921.2V747.5H749.2zM932.7 736.0H944.2V747.5H932.7zM1598.0 736.0H1620.9V747.5H1598.0zM737.7 747.5H749.2V759.0H737.7zM760.6 747.5H852.4V759.0H760.6zM863.9 747.5H932.7V759.0H863.9zM1242.4 747.5H1253.8V759.0H1242.4zM1586.5 747.5H1598.0V759.0H1586.5zM737.7 759.0H749.2V770.4H737.7zM760.6 759.0H852.4V770.4H760.6zM863.9 759.0H909.8V770.4H863.9zM932.7 759.0H944.2V770.4H932.7zM990.0 759.0H1001.5V770.4H990.0zM1552.1 759.0H1598.0V770.4H1552.1zM737.7 770.4H852.4V781.9H737.7zM863.9 770.4H944.2V781.9H863.9zM1219.4 770.4H1242.4V781.9H1219.4zM1540.6 770.4H1575.0V781.9H1540.6zM840.9 781.9H852.4V793.4H840.9zM875.3 781.9H886.8V793.4H875.3zM921.2 781.9H932.7V793.4H921.2zM1219.4 781.9H1230.9V793.4H1219.4zM1529.1 781.9H1563.5V793.4H1529.1zM852.4 793.4H863.9V804.8H852.4zM875.3 793.4H886.8V804.8H875.3zM1506.2 793.4H1552.1V804.8H1506.2zM863.9 804.8H875.3V816.3H863.9zM898.3 804.8H909.8V816.3H898.3zM1506.2 804.8H1552.1V816.3H1506.2zM806.5 816.3H840.9V827.8H806.5zM898.3 816.3H909.8V827.8H898.3zM1299.7 816.3H1322.7V827.8H1299.7zM1334.1 816.3H1357.1V827.8H1334.1zM1494.7 816.3H1529.1V827.8H1494.7zM795.1 827.8H806.5V839.2H795.1zM898.3 827.8H909.8V839.2H898.3zM1288.3 827.8H1357.1V839.2H1288.3zM1380.0 827.8H1403.0V839.2H1380.0zM1483.2 827.8H1517.7V839.2H1483.2zM760.6 839.2H806.5V850.7H760.6zM886.8 839.2H909.8V850.7H886.8zM1299.7 839.2H1345.6V850.7H1299.7zM1357.1 839.2H1403.0V850.7H1357.1zM1483.2 839.2H1506.2V850.7H1483.2zM737.7 850.7H772.1V862.2H737.7zM795.1 850.7H852.4V862.2H795.1zM1150.6 850.7H1208.0V862.2H1150.6zM1242.4 850.7H1288.3V862.2H1242.4zM1311.2 850.7H1460.3V862.2H1311.2zM1471.8 850.7H1494.7V862.2H1471.8zM737.7 862.2H760.6V873.7H737.7zM795.1 862.2H829.5V873.7H795.1zM1127.7 862.2H1196.5V873.7H1127.7zM1242.4 862.2H1311.2V873.7H1242.4zM1391.5 862.2H1403.0V873.7H1391.5zM1414.4 862.2H1448.8V873.7H1414.4zM1483.2 862.2H1494.7V873.7H1483.2zM737.7 873.7H749.2V885.1H737.7zM806.5 873.7H840.9V885.1H806.5zM1127.7 873.7H1196.5V885.1H1127.7zM1242.4 873.7H1311.2V885.1H1242.4zM1483.2 873.7H1494.7V885.1H1483.2zM737.7 885.1H760.6V896.6H737.7zM806.5 885.1H829.5V896.6H806.5zM852.4 885.1H863.9V896.6H852.4zM1150.6 885.1H1219.4V896.6H1150.6zM1242.4 885.1H1311.2V896.6H1242.4zM1460.3 885.1H1494.7V896.6H1460.3zM795.1 896.6H829.5V908.1H795.1zM852.4 896.6H875.3V908.1H852.4zM1139.2 896.6H1219.4V908.1H1139.2zM818.0 908.1H898.3V919.5H818.0zM909.8 908.1H932.7V919.5H909.8zM1139.2 908.1H1162.1V919.5H1139.2zM806.5 919.5H818.0V931.0H806.5zM921.2 919.5H932.7V931.0H921.2zM1081.8 919.5H1093.3V931.0H1081.8zM1139.2 919.5H1150.6V931.0H1139.2zM1827.4 919.5H1861.8V931.0H1827.4zM760.6 931.0H772.1V942.5H760.6zM921.2 931.0H955.6V942.5H921.2zM1081.8 931.0H1093.3V942.5H1081.8zM1139.2 931.0H1150.6V942.5H1139.2zM1460.3 931.0H1483.2V942.5H1460.3zM1815.9 931.0H1827.4V942.5H1815.9zM1861.8 931.0H1873.2V942.5H1861.8zM760.6 942.5H772.1V953.9H760.6zM932.7 942.5H944.2V953.9H932.7zM1070.3 942.5H1093.3V953.9H1070.3zM1127.7 942.5H1139.2V953.9H1127.7zM1804.4 942.5H1827.4V953.9H1804.4zM772.1 953.9H783.6V965.4H772.1zM1070.3 953.9H1081.8V965.4H1070.3zM1116.2 953.9H1139.2V965.4H1116.2zM1850.3 953.9H1861.8V965.4H1850.3zM772.1 965.4H783.6V976.9H772.1zM795.1 965.4H852.4V976.9H795.1zM1070.3 965.4H1127.7V976.9H1070.3zM1827.4 965.4H1861.8V976.9H1827.4zM840.9 976.9H852.4V988.4H840.9zM944.2 976.9H955.6V988.4H944.2zM1081.8 976.9H1093.3V988.4H1081.8zM1116.2 976.9H1139.2V988.4H1116.2zM1150.6 976.9H1185.0V988.4H1150.6zM1196.5 976.9H1208.0V988.4H1196.5zM1815.9 976.9H1850.3V988.4H1815.9zM760.6 988.4H772.1V999.8H760.6zM829.5 988.4H852.4V999.8H829.5zM955.6 988.4H967.1V999.8H955.6zM1058.9 988.4H1081.8V999.8H1058.9zM1747.1 988.4H1758.5V999.8H1747.1zM1792.9 988.4H1850.3V999.8H1792.9zM818.0 999.8H852.4V1011.3H818.0zM863.9 999.8H886.8V1011.3H863.9zM1001.5 999.8H1013.0V1011.3H1001.5zM1024.5 999.8H1058.9V1011.3H1024.5zM1185.0 999.8H1196.5V1011.3H1185.0zM1747.1 999.8H1758.5V1011.3H1747.1zM1804.4 999.8H1850.3V1011.3H1804.4zM886.8 1011.3H932.7V1022.8H886.8zM955.6 1011.3H967.1V1022.8H955.6zM990.0 1011.3H1001.5V1022.8H990.0zM1185.0 1011.3H1230.9V1022.8H1185.0zM1747.1 1011.3H1850.3V1022.8H1747.1zM795.1 1022.8H818.0V1034.2H795.1zM932.7 1022.8H944.2V1034.2H932.7zM990.0 1022.8H1001.5V1034.2H990.0zM1127.7 1022.8H1139.2V1034.2H1127.7zM1712.7 1022.8H1770.0V1034.2H1712.7zM1781.5 1022.8H1838.8V1034.2H1781.5zM829.5 1034.2H840.9V1045.7H829.5zM944.2 1034.2H955.6V1045.7H944.2zM978.6 1034.2H990.0V1045.7H978.6zM1058.9 1034.2H1081.8V1045.7H1058.9zM1724.1 1034.2H1735.6V1045.7H1724.1zM1747.1 1034.2H1758.5V1045.7H1747.1zM1770.0 1034.2H1850.3V1045.7H1770.0zM967.1 1045.7H978.6V1057.2H967.1zM1070.3 1045.7H1081.8V1057.2H1070.3zM1150.6 1045.7H1162.1V1057.2H1150.6zM1712.7 1045.7H1724.1V1057.2H1712.7zM1747.1 1045.7H1758.5V1057.2H1747.1zM1770.0 1045.7H1850.3V1057.2H1770.0zM840.9 1057.2H852.4V1068.6H840.9zM1689.7 1057.2H1724.1V1068.6H1689.7zM1770.0 1057.2H1850.3V1068.6H1770.0zM818.0 1068.6H852.4V1080.1H818.0zM1689.7 1068.6H1724.1V1080.1H1689.7zM1781.5 1068.6H1850.3V1080.1H1781.5zM772.1 1080.1H783.6V1091.6H772.1zM829.5 1080.1H840.9V1091.6H829.5zM852.4 1080.1H863.9V1091.6H852.4zM1196.5 1080.1H1208.0V1091.6H1196.5zM1643.8 1080.1H1689.7V1091.6H1643.8zM1701.2 1080.1H1724.1V1091.6H1701.2zM1792.9 1080.1H1850.3V1091.6H1792.9zM760.6 1091.6H772.1V1103.0H760.6zM806.5 1091.6H818.0V1103.0H806.5zM863.9 1091.6H875.3V1103.0H863.9zM898.3 1091.6H909.8V1103.0H898.3zM932.7 1091.6H944.2V1103.0H932.7zM1196.5 1091.6H1219.4V1103.0H1196.5zM1643.8 1091.6H1666.8V1103.0H1643.8zM1804.4 1091.6H1850.3V1103.0H1804.4zM863.9 1103.0H898.3V1114.5H863.9zM932.7 1103.0H944.2V1114.5H932.7zM1655.3 1103.0H1701.2V1114.5H1655.3zM1781.5 1103.0H1850.3V1114.5H1781.5zM863.9 1114.5H898.3V1126.0H863.9zM921.2 1114.5H932.7V1126.0H921.2zM1643.8 1114.5H1712.7V1126.0H1643.8zM1735.6 1114.5H1747.1V1126.0H1735.6zM1781.5 1114.5H1838.8V1126.0H1781.5zM886.8 1126.0H898.3V1137.5H886.8zM909.8 1126.0H921.2V1137.5H909.8zM932.7 1126.0H944.2V1137.5H932.7zM1196.5 1126.0H1219.4V1137.5H1196.5zM1666.8 1126.0H1701.2V1137.5H1666.8zM1724.1 1126.0H1747.1V1137.5H1724.1zM1781.5 1126.0H1850.3V1137.5H1781.5zM806.5 1137.5H840.9V1148.9H806.5zM863.9 1137.5H886.8V1148.9H863.9zM898.3 1137.5H921.2V1148.9H898.3zM1196.5 1137.5H1219.4V1148.9H1196.5zM1598.0 1137.5H1655.3V1148.9H1598.0zM1678.2 1137.5H1758.5V1148.9H1678.2zM1781.5 1137.5H1850.3V1148.9H1781.5zM772.1 1148.9H783.6V1160.4H772.1zM840.9 1148.9H852.4V1160.4H840.9zM955.6 1148.9H978.6V1160.4H955.6zM1230.9 1148.9H1253.8V1160.4H1230.9zM1598.0 1148.9H1712.7V1160.4H1598.0zM1724.1 1148.9H1758.5V1160.4H1724.1zM1804.4 1148.9H1850.3V1160.4H1804.4zM772.1 1160.4H783.6V1171.9H772.1zM840.9 1160.4H852.4V1171.9H840.9zM1219.4 1160.4H1230.9V1171.9H1219.4zM1242.4 1160.4H1265.3V1171.9H1242.4zM1598.0 1160.4H1712.7V1171.9H1598.0zM1724.1 1160.4H1735.6V1171.9H1724.1zM1781.5 1160.4H1792.9V1171.9H1781.5zM1815.9 1160.4H1861.8V1171.9H1815.9zM783.6 1171.9H795.1V1183.3H783.6zM852.4 1171.9H863.9V1183.3H852.4zM1219.4 1171.9H1242.4V1183.3H1219.4zM1598.0 1171.9H1724.1V1183.3H1598.0zM1827.4 1171.9H1861.8V1183.3H1827.4zM1598.0 1183.3H1735.6V1194.8H1598.0zM1815.9 1183.3H1861.8V1194.8H1815.9zM1529.1 1194.8H1609.4V1206.3H1529.1zM1620.9 1194.8H1689.7V1206.3H1620.9zM1701.2 1194.8H1735.6V1206.3H1701.2zM1815.9 1194.8H1838.8V1206.3H1815.9zM1850.3 1194.8H1873.2V1206.3H1850.3zM1540.6 1206.3H1563.5V1217.8H1540.6zM1575.0 1206.3H1609.4V1217.8H1575.0zM1620.9 1206.3H1689.7V1217.8H1620.9zM1701.2 1206.3H1747.1V1217.8H1701.2zM1804.4 1206.3H1827.4V1217.8H1804.4zM1838.8 1206.3H1850.3V1217.8H1838.8zM1861.8 1206.3H1873.2V1217.8H1861.8zM1517.7 1217.8H1598.0V1229.2H1517.7zM1712.7 1217.8H1747.1V1229.2H1712.7zM1781.5 1217.8H1815.9V1229.2H1781.5zM1861.8 1217.8H1873.2V1229.2H1861.8zM1712.7 1229.2H1747.1V1240.7H1712.7zM1758.5 1229.2H1838.8V1240.7H1758.5zM1861.8 1229.2H1873.2V1240.7H1861.8zM1861.8 1240.7H1873.2V1252.2H1861.8z"/><path fill="#463480" d="M1460.3 346.0H1471.8V357.5H1460.3zM1517.7 346.0H1529.1V357.5H1517.7zM1380.0 380.4H1403.0V391.9H1380.0zM1380.0 391.9H1403.0V403.4H1380.0zM1414.4 391.9H1425.9V403.4H1414.4zM1357.1 403.4H1368.6V414.9H1357.1zM1403.0 403.4H1414.4V414.9H1403.0zM1575.0 414.9H1586.5V426.3H1575.0zM1322.7 426.3H1334.1V437.8H1322.7zM1345.6 426.3H1357.1V437.8H1345.6zM1598.0 426.3H1609.4V437.8H1598.0zM1322.7 437.8H1334.1V449.3H1322.7zM1345.6 437.8H1357.1V449.3H1345.6zM1403.0 437.8H1425.9V449.3H1403.0zM1575.0 437.8H1586.5V449.3H1575.0zM1311.2 449.3H1322.7V460.7H1311.2zM1345.6 449.3H1357.1V460.7H1345.6zM1586.5 449.3H1620.9V460.7H1586.5zM1299.7 460.7H1311.2V472.2H1299.7zM1345.6 460.7H1380.0V472.2H1345.6zM1620.9 460.7H1632.4V472.2H1620.9zM1288.3 472.2H1299.7V483.7H1288.3zM1345.6 472.2H1391.5V483.7H1345.6zM1655.3 472.2H1666.8V483.7H1655.3zM1345.6 483.7H1357.1V495.1H1345.6zM1380.0 483.7H1391.5V495.1H1380.0zM1655.3 483.7H1666.8V495.1H1655.3zM1276.8 495.1H1288.3V506.6H1276.8zM1357.1 495.1H1391.5V506.6H1357.1zM1483.2 495.1H1494.7V506.6H1483.2zM1666.8 495.1H1678.2V506.6H1666.8zM1357.1 506.6H1380.0V518.1H1357.1zM1655.3 506.6H1666.8V518.1H1655.3zM1678.2 506.6H1689.7V518.1H1678.2zM1265.3 518.1H1276.8V529.6H1265.3zM1299.7 518.1H1311.2V529.6H1299.7zM1322.7 518.1H1334.1V529.6H1322.7zM1391.5 518.1H1414.4V529.6H1391.5zM1689.7 518.1H1701.2V529.6H1689.7zM1781.5 518.1H1792.9V529.6H1781.5zM1288.3 529.6H1299.7V541.0H1288.3zM1311.2 529.6H1322.7V541.0H1311.2zM1334.1 529.6H1345.6V541.0H1334.1zM1357.1 529.6H1380.0V541.0H1357.1zM1414.4 529.6H1437.4V541.0H1414.4zM1471.8 529.6H1494.7V541.0H1471.8zM1265.3 541.0H1276.8V552.5H1265.3zM1242.4 552.5H1276.8V564.0H1242.4zM1494.7 552.5H1517.7V564.0H1494.7zM1666.8 552.5H1678.2V564.0H1666.8zM1334.1 564.0H1345.6V575.4H1334.1zM1506.2 564.0H1517.7V575.4H1506.2zM1666.8 564.0H1689.7V575.4H1666.8zM1838.8 564.0H1850.3V575.4H1838.8zM1058.9 575.4H1081.8V586.9H1058.9zM1139.2 575.4H1150.6V586.9H1139.2zM1299.7 575.4H1311.2V586.9H1299.7zM1334.1 575.4H1345.6V586.9H1334.1zM1506.2 575.4H1529.1V586.9H1506.2zM1666.8 575.4H1678.2V586.9H1666.8zM1838.8 575.4H1850.3V586.9H1838.8zM1047.4 586.9H1058.9V598.4H1047.4zM1093.3 586.9H1104.7V598.4H1093.3zM1230.9 586.9H1242.4V598.4H1230.9zM1299.7 586.9H1311.2V598.4H1299.7zM1506.2 586.9H1517.7V598.4H1506.2zM1540.6 586.9H1552.1V598.4H1540.6zM1666.8 586.9H1678.2V598.4H1666.8zM1758.5 586.9H1792.9V598.4H1758.5zM1827.4 586.9H1850.3V598.4H1827.4zM1873.2 586.9H1896.2V598.4H1873.2zM1035.9 598.4H1047.4V609.8H1035.9zM1093.3 598.4H1104.7V609.8H1093.3zM1299.7 598.4H1322.7V609.8H1299.7zM1345.6 598.4H1368.6V609.8H1345.6zM1506.2 598.4H1529.1V609.8H1506.2zM1598.0 598.4H1609.4V609.8H1598.0zM1655.3 598.4H1689.7V609.8H1655.3zM1770.0 598.4H1815.9V609.8H1770.0zM1838.8 598.4H1850.3V609.8H1838.8zM990.0 609.8H1001.5V621.3H990.0zM1035.9 609.8H1047.4V621.3H1035.9zM1070.3 609.8H1081.8V621.3H1070.3zM1288.3 609.8H1322.7V621.3H1288.3zM1586.5 609.8H1598.0V621.3H1586.5zM1666.8 609.8H1678.2V621.3H1666.8zM967.1 621.3H990.0V632.8H967.1zM1024.5 621.3H1035.9V632.8H1024.5zM1070.3 621.3H1081.8V632.8H1070.3zM1127.7 621.3H1139.2V632.8H1127.7zM1196.5 621.3H1219.4V632.8H1196.5zM1253.8 621.3H1288.3V632.8H1253.8zM1620.9 621.3H1655.3V632.8H1620.9zM1701.2 621.3H1712.7V632.8H1701.2zM1724.1 621.3H1758.5V632.8H1724.1zM944.2 632.8H955.6V644.2H944.2zM1047.4 632.8H1070.3V644.2H1047.4zM1081.8 632.8H1104.7V644.2H1081.8zM1116.2 632.8H1150.6V644.2H1116.2zM1185.0 632.8H1196.5V644.2H1185.0zM886.8 644.2H898.3V655.7H886.8zM967.1 644.2H978.6V655.7H967.1zM1035.9 644.2H1047.4V655.7H1035.9zM1070.3 644.2H1093.3V655.7H1070.3zM1116.2 644.2H1127.7V655.7H1116.2zM1185.0 644.2H1196.5V655.7H1185.0zM1253.8 644.2H1276.8V655.7H1253.8zM1288.3 644.2H1299.7V655.7H1288.3zM1666.8 644.2H1678.2V655.7H1666.8zM852.4 655.7H863.9V667.2H852.4zM967.1 655.7H978.6V667.2H967.1zM1001.5 655.7H1013.0V667.2H1001.5zM1070.3 655.7H1081.8V667.2H1070.3zM1127.7 655.7H1139.2V667.2H1127.7zM1173.6 655.7H1185.0V667.2H1173.6zM1253.8 655.7H1276.8V667.2H1253.8zM1655.3 655.7H1666.8V667.2H1655.3zM829.5 667.2H840.9V678.7H829.5zM898.3 667.2H909.8V678.7H898.3zM932.7 667.2H944.2V678.7H932.7zM955.6 667.2H967.1V678.7H955.6zM1001.5 667.2H1035.9V678.7H1001.5zM1058.9 667.2H1070.3V678.7H1058.9zM1139.2 667.2H1162.1V678.7H1139.2zM1288.3 667.2H1299.7V678.7H1288.3zM829.5 678.7H840.9V690.1H829.5zM875.3 678.7H898.3V690.1H875.3zM1081.8 678.7H1093.3V690.1H1081.8zM1265.3 678.7H1276.8V690.1H1265.3zM1598.0 678.7H1632.4V690.1H1598.0zM795.1 690.1H818.0V701.6H795.1zM829.5 690.1H840.9V701.6H829.5zM898.3 690.1H921.2V701.6H898.3zM1013.0 690.1H1035.9V701.6H1013.0zM1058.9 690.1H1093.3V701.6H1058.9zM1598.0 690.1H1609.4V701.6H1598.0zM829.5 701.6H840.9V713.1H829.5zM1001.5 701.6H1035.9V713.1H1001.5zM1173.6 701.6H1196.5V713.1H1173.6zM1586.5 701.6H1598.0V713.1H1586.5zM772.1 713.1H795.1V724.5H772.1zM875.3 713.1H886.8V724.5H875.3zM1173.6 713.1H1185.0V724.5H1173.6zM1230.9 713.1H1242.4V724.5H1230.9zM1540.6 713.1H1563.5V724.5H1540.6zM1575.0 713.1H1586.5V724.5H1575.0zM944.2 724.5H990.0V736.0H944.2zM1035.9 724.5H1047.4V736.0H1035.9zM1540.6 724.5H1552.1V736.0H1540.6zM1563.5 724.5H1575.0V736.0H1563.5zM921.2 736.0H932.7V747.5H921.2zM944.2 736.0H955.6V747.5H944.2zM1081.8 736.0H1093.3V747.5H1081.8zM1586.5 736.0H1598.0V747.5H1586.5zM749.2 747.5H760.6V759.0H749.2zM852.4 747.5H863.9V759.0H852.4zM932.7 747.5H944.2V759.0H932.7zM1230.9 747.5H1242.4V759.0H1230.9zM1253.8 747.5H1276.8V759.0H1253.8zM1575.0 747.5H1586.5V759.0H1575.0zM749.2 759.0H760.6V770.4H749.2zM852.4 759.0H863.9V770.4H852.4zM944.2 759.0H955.6V770.4H944.2zM978.6 759.0H990.0V770.4H978.6zM1001.5 759.0H1013.0V770.4H1001.5zM1219.4 759.0H1265.3V770.4H1219.4zM1540.6 759.0H1552.1V770.4H1540.6zM852.4 770.4H863.9V781.9H852.4zM944.2 770.4H955.6V781.9H944.2zM1001.5 770.4H1013.0V781.9H1001.5zM1208.0 770.4H1219.4V781.9H1208.0zM1242.4 770.4H1253.8V781.9H1242.4zM1529.1 770.4H1540.6V781.9H1529.1zM863.9 781.9H875.3V793.4H863.9zM898.3 781.9H921.2V793.4H898.3zM932.7 781.9H955.6V793.4H932.7zM1208.0 781.9H1219.4V793.4H1208.0zM1230.9 781.9H1242.4V793.4H1230.9zM1517.7 781.9H1529.1V793.4H1517.7zM840.9 793.4H852.4V804.8H840.9zM863.9 793.4H875.3V804.8H863.9zM898.3 793.4H909.8V804.8H898.3zM921.2 793.4H932.7V804.8H921.2zM1219.4 793.4H1242.4V804.8H1219.4zM1494.7 793.4H1506.2V804.8H1494.7zM1345.6 804.8H1357.1V816.3H1345.6zM909.8 816.3H932.7V827.8H909.8zM1288.3 816.3H1299.7V827.8H1288.3zM1322.7 816.3H1334.1V827.8H1322.7zM1483.2 816.3H1494.7V827.8H1483.2zM806.5 827.8H818.0V839.2H806.5zM875.3 827.8H898.3V839.2H875.3zM909.8 827.8H932.7V839.2H909.8zM1276.8 827.8H1288.3V839.2H1276.8zM1357.1 827.8H1380.0V839.2H1357.1zM1471.8 827.8H1483.2V839.2H1471.8zM1689.7 827.8H1701.2V839.2H1689.7zM806.5 839.2H829.5V850.7H806.5zM875.3 839.2H886.8V850.7H875.3zM909.8 839.2H921.2V850.7H909.8zM1162.1 839.2H1208.0V850.7H1162.1zM1425.9 839.2H1460.3V850.7H1425.9zM852.4 850.7H886.8V862.2H852.4zM1081.8 850.7H1093.3V862.2H1081.8zM1139.2 850.7H1150.6V862.2H1139.2zM1230.9 850.7H1242.4V862.2H1230.9zM1288.3 850.7H1311.2V862.2H1288.3zM760.6 862.2H772.1V873.7H760.6zM829.5 862.2H875.3V873.7H829.5zM1081.8 862.2H1093.3V873.7H1081.8zM1196.5 862.2H1208.0V873.7H1196.5zM1230.9 862.2H1242.4V873.7H1230.9zM1403.0 862.2H1414.4V873.7H1403.0zM1448.8 862.2H1460.3V873.7H1448.8zM1471.8 862.2H1483.2V873.7H1471.8zM749.2 873.7H760.6V885.1H749.2zM795.1 873.7H806.5V885.1H795.1zM840.9 873.7H863.9V885.1H840.9zM1116.2 873.7H1127.7V885.1H1116.2zM1196.5 873.7H1208.0V885.1H1196.5zM1230.9 873.7H1242.4V885.1H1230.9zM1460.3 873.7H1471.8V885.1H1460.3zM795.1 885.1H806.5V896.6H795.1zM840.9 885.1H852.4V896.6H840.9zM863.9 885.1H875.3V896.6H863.9zM1024.5 885.1H1047.4V896.6H1024.5zM1116.2 885.1H1127.7V896.6H1116.2zM1139.2 885.1H1150.6V896.6H1139.2zM1219.4 885.1H1242.4V896.6H1219.4zM737.7 896.6H783.6V908.1H737.7zM875.3 896.6H932.7V908.1H875.3zM955.6 896.6H967.1V908.1H955.6zM1024.5 896.6H1035.9V908.1H1024.5zM1127.7 896.6H1139.2V908.1H1127.7zM795.1 908.1H818.0V919.5H795.1zM932.7 908.1H967.1V919.5H932.7zM1127.7 908.1H1139.2V919.5H1127.7zM772.1 919.5H806.5V931.0H772.1zM932.7 919.5H955.6V931.0H932.7zM967.1 919.5H978.6V931.0H967.1zM1058.9 919.5H1081.8V931.0H1058.9zM1093.3 919.5H1104.7V931.0H1093.3zM1116.2 919.5H1139.2V931.0H1116.2zM1861.8 919.5H1873.2V931.0H1861.8zM955.6 931.0H967.1V942.5H955.6zM1035.9 931.0H1058.9V942.5H1035.9zM1070.3 931.0H1081.8V942.5H1070.3zM1127.7 931.0H1139.2V942.5H1127.7zM1827.4 931.0H1838.8V942.5H1827.4zM749.2 942.5H760.6V953.9H749.2zM944.2 942.5H955.6V953.9H944.2zM1093.3 942.5H1104.7V953.9H1093.3zM1116.2 942.5H1127.7V953.9H1116.2zM1827.4 942.5H1838.8V953.9H1827.4zM760.6 953.9H772.1V965.4H760.6zM932.7 953.9H944.2V965.4H932.7zM1058.9 953.9H1070.3V965.4H1058.9zM1081.8 953.9H1116.2V965.4H1081.8zM1792.9 953.9H1804.4V965.4H1792.9zM1815.9 953.9H1827.4V965.4H1815.9zM1838.8 953.9H1850.3V965.4H1838.8zM760.6 965.4H772.1V976.9H760.6zM783.6 965.4H795.1V976.9H783.6zM944.2 965.4H955.6V976.9H944.2zM1013.0 965.4H1024.5V976.9H1013.0zM1058.9 965.4H1070.3V976.9H1058.9zM1770.0 965.4H1792.9V976.9H1770.0zM772.1 976.9H783.6V988.4H772.1zM1013.0 976.9H1035.9V988.4H1013.0zM1058.9 976.9H1081.8V988.4H1058.9zM1139.2 976.9H1150.6V988.4H1139.2zM1185.0 976.9H1196.5V988.4H1185.0zM1758.5 976.9H1770.0V988.4H1758.5zM772.1 988.4H783.6V999.8H772.1zM795.1 988.4H829.5V999.8H795.1zM1001.5 988.4H1035.9V999.8H1001.5zM1047.4 988.4H1058.9V999.8H1047.4zM1196.5 988.4H1208.0V999.8H1196.5zM1758.5 988.4H1770.0V999.8H1758.5zM1781.5 988.4H1792.9V999.8H1781.5zM783.6 999.8H795.1V1011.3H783.6zM898.3 999.8H909.8V1011.3H898.3zM967.1 999.8H990.0V1011.3H967.1zM1013.0 999.8H1024.5V1011.3H1013.0zM1196.5 999.8H1208.0V1011.3H1196.5zM1758.5 999.8H1804.4V1011.3H1758.5zM932.7 1011.3H955.6V1022.8H932.7zM967.1 1011.3H990.0V1022.8H967.1zM749.2 1022.8H795.1V1034.2H749.2zM978.6 1022.8H990.0V1034.2H978.6zM1219.4 1022.8H1230.9V1034.2H1219.4zM772.1 1034.2H783.6V1045.7H772.1zM795.1 1034.2H829.5V1045.7H795.1zM1735.6 1034.2H1747.1V1045.7H1735.6zM1758.5 1034.2H1770.0V1045.7H1758.5zM795.1 1045.7H818.0V1057.2H795.1zM829.5 1045.7H852.4V1057.2H829.5zM1735.6 1045.7H1747.1V1057.2H1735.6zM1758.5 1045.7H1770.0V1057.2H1758.5zM806.5 1057.2H818.0V1068.6H806.5zM1724.1 1057.2H1747.1V1068.6H1724.1zM1724.1 1068.6H1735.6V1080.1H1724.1zM737.7 1080.1H772.1V1091.6H737.7zM783.6 1080.1H795.1V1091.6H783.6zM840.9 1080.1H852.4V1091.6H840.9zM1689.7 1080.1H1701.2V1091.6H1689.7zM1781.5 1080.1H1792.9V1091.6H1781.5zM852.4 1091.6H863.9V1103.0H852.4zM1666.8 1091.6H1712.7V1103.0H1666.8zM852.4 1103.0H863.9V1114.5H852.4zM1701.2 1103.0H1735.6V1114.5H1701.2zM1758.5 1103.0H1781.5V1114.5H1758.5zM818.0 1114.5H829.5V1126.0H818.0zM1724.1 1114.5H1735.6V1126.0H1724.1zM1838.8 1114.5H1850.3V1126.0H1838.8zM818.0 1126.0H829.5V1137.5H818.0zM863.9 1126.0H886.8V1137.5H863.9zM898.3 1126.0H909.8V1137.5H898.3zM1655.3 1126.0H1666.8V1137.5H1655.3zM1701.2 1126.0H1724.1V1137.5H1701.2zM1747.1 1126.0H1758.5V1137.5H1747.1zM852.4 1137.5H863.9V1148.9H852.4zM1770.0 1137.5H1781.5V1148.9H1770.0zM795.1 1148.9H806.5V1160.4H795.1zM1712.7 1148.9H1724.1V1160.4H1712.7zM1770.0 1148.9H1804.4V1160.4H1770.0zM783.6 1160.4H806.5V1171.9H783.6zM1230.9 1160.4H1242.4V1171.9H1230.9zM1712.7 1160.4H1724.1V1171.9H1712.7zM1747.1 1160.4H1758.5V1171.9H1747.1zM1770.0 1160.4H1781.5V1171.9H1770.0zM1792.9 1160.4H1815.9V1171.9H1792.9zM1724.1 1171.9H1747.1V1183.3H1724.1zM1781.5 1171.9H1804.4V1183.3H1781.5zM1815.9 1171.9H1827.4V1183.3H1815.9zM1792.9 1183.3H1815.9V1194.8H1792.9zM1689.7 1194.8H1701.2V1206.3H1689.7zM1804.4 1194.8H1815.9V1206.3H1804.4zM1838.8 1194.8H1850.3V1206.3H1838.8zM1563.5 1206.3H1575.0V1217.8H1563.5zM1609.4 1206.3H1620.9V1217.8H1609.4zM1689.7 1206.3H1701.2V1217.8H1689.7zM1792.9 1206.3H1804.4V1217.8H1792.9zM1747.1 1217.8H1758.5V1229.2H1747.1zM1770.0 1217.8H1781.5V1229.2H1770.0zM1838.8 1217.8H1850.3V1229.2H1838.8zM1747.1 1229.2H1758.5V1240.7H1747.1zM1838.8 1229.2H1850.3V1240.7H1838.8zM1827.4 1240.7H1861.8V1252.2H1827.4z"/><path fill="#3b528b" d="M1334.1 414.9H1357.1V426.3H1334.1zM1575.0 426.3H1598.0V437.8H1575.0zM1322.7 449.3H1334.1V460.7H1322.7zM1311.2 460.7H1322.7V472.2H1311.2zM1655.3 460.7H1666.8V472.2H1655.3zM1357.1 483.7H1380.0V495.1H1357.1zM1380.0 506.6H1391.5V518.1H1380.0zM1276.8 518.1H1299.7V529.6H1276.8zM1357.1 518.1H1380.0V529.6H1357.1zM1678.2 518.1H1689.7V529.6H1678.2zM1701.2 518.1H1712.7V529.6H1701.2zM1253.8 529.6H1288.3V541.0H1253.8zM1380.0 529.6H1414.4V541.0H1380.0zM1437.4 529.6H1460.3V541.0H1437.4zM1357.1 541.0H1380.0V552.5H1357.1zM1483.2 541.0H1494.7V552.5H1483.2zM1494.7 564.0H1506.2V575.4H1494.7zM1815.9 564.0H1827.4V575.4H1815.9zM1116.2 575.4H1127.7V586.9H1116.2zM1483.2 575.4H1506.2V586.9H1483.2zM1334.1 586.9H1345.6V598.4H1334.1zM1357.1 586.9H1380.0V598.4H1357.1zM1494.7 586.9H1506.2V598.4H1494.7zM1701.2 586.9H1712.7V598.4H1701.2zM1735.6 586.9H1747.1V598.4H1735.6zM1792.9 586.9H1804.4V598.4H1792.9zM1815.9 586.9H1827.4V598.4H1815.9zM1058.9 598.4H1070.3V609.8H1058.9zM1322.7 598.4H1334.1V609.8H1322.7zM1494.7 598.4H1506.2V609.8H1494.7zM1689.7 598.4H1701.2V609.8H1689.7zM1758.5 598.4H1770.0V609.8H1758.5zM1815.9 598.4H1838.8V609.8H1815.9zM1001.5 609.8H1013.0V621.3H1001.5zM1058.9 609.8H1070.3V621.3H1058.9zM1093.3 609.8H1104.7V621.3H1093.3zM1230.9 609.8H1253.8V621.3H1230.9zM1529.1 609.8H1552.1V621.3H1529.1zM1598.0 609.8H1609.4V621.3H1598.0zM1758.5 609.8H1770.0V621.3H1758.5zM1035.9 621.3H1047.4V632.8H1035.9zM1058.9 621.3H1070.3V632.8H1058.9zM1093.3 621.3H1104.7V632.8H1093.3zM1116.2 621.3H1127.7V632.8H1116.2zM1219.4 621.3H1230.9V632.8H1219.4zM1563.5 621.3H1586.5V632.8H1563.5zM1655.3 621.3H1666.8V632.8H1655.3zM1689.7 621.3H1701.2V632.8H1689.7zM955.6 632.8H978.6V644.2H955.6zM1024.5 632.8H1035.9V644.2H1024.5zM1070.3 632.8H1081.8V644.2H1070.3zM1150.6 632.8H1162.1V644.2H1150.6zM1265.3 632.8H1276.8V644.2H1265.3zM1299.7 632.8H1311.2V644.2H1299.7zM1678.2 632.8H1689.7V644.2H1678.2zM955.6 644.2H967.1V655.7H955.6zM978.6 644.2H1001.5V655.7H978.6zM1013.0 644.2H1035.9V655.7H1013.0zM1196.5 644.2H1208.0V655.7H1196.5zM1242.4 644.2H1253.8V655.7H1242.4zM1460.3 644.2H1471.8V655.7H1460.3zM863.9 655.7H875.3V667.2H863.9zM955.6 655.7H967.1V667.2H955.6zM1013.0 655.7H1024.5V667.2H1013.0zM1185.0 655.7H1196.5V667.2H1185.0zM1242.4 655.7H1253.8V667.2H1242.4zM1276.8 655.7H1288.3V667.2H1276.8zM840.9 667.2H852.4V678.7H840.9zM1070.3 667.2H1081.8V678.7H1070.3zM1162.1 667.2H1196.5V678.7H1162.1zM1253.8 667.2H1288.3V678.7H1253.8zM852.4 678.7H863.9V690.1H852.4zM909.8 678.7H921.2V690.1H909.8zM1058.9 678.7H1081.8V690.1H1058.9zM1093.3 678.7H1104.7V690.1H1093.3zM1162.1 678.7H1185.0V690.1H1162.1zM1253.8 678.7H1265.3V690.1H1253.8zM1288.3 678.7H1299.7V690.1H1288.3zM818.0 690.1H829.5V701.6H818.0zM1035.9 690.1H1047.4V701.6H1035.9zM1162.1 690.1H1185.0V701.6H1162.1zM1265.3 690.1H1276.8V701.6H1265.3zM783.6 701.6H806.5V713.1H783.6zM1035.9 701.6H1047.4V713.1H1035.9zM1081.8 701.6H1093.3V713.1H1081.8zM1162.1 701.6H1173.6V713.1H1162.1zM1196.5 701.6H1219.4V713.1H1196.5zM1230.9 701.6H1242.4V713.1H1230.9zM1575.0 701.6H1586.5V713.1H1575.0zM1162.1 713.1H1173.6V724.5H1162.1zM1185.0 713.1H1196.5V724.5H1185.0zM1242.4 713.1H1253.8V724.5H1242.4zM1529.1 713.1H1540.6V724.5H1529.1zM1563.5 713.1H1575.0V724.5H1563.5zM898.3 724.5H909.8V736.0H898.3zM1047.4 724.5H1058.9V736.0H1047.4zM1173.6 724.5H1185.0V736.0H1173.6zM1575.0 724.5H1609.4V736.0H1575.0zM955.6 736.0H978.6V747.5H955.6zM1070.3 736.0H1081.8V747.5H1070.3zM1230.9 736.0H1276.8V747.5H1230.9zM1575.0 736.0H1586.5V747.5H1575.0zM944.2 747.5H955.6V759.0H944.2zM978.6 747.5H990.0V759.0H978.6zM1013.0 747.5H1024.5V759.0H1013.0zM1070.3 747.5H1093.3V759.0H1070.3zM1219.4 747.5H1230.9V759.0H1219.4zM1563.5 747.5H1575.0V759.0H1563.5zM1208.0 759.0H1219.4V770.4H1208.0zM1265.3 759.0H1276.8V770.4H1265.3zM955.6 770.4H978.6V781.9H955.6zM990.0 770.4H1001.5V781.9H990.0zM1196.5 770.4H1208.0V781.9H1196.5zM852.4 781.9H863.9V793.4H852.4zM1196.5 781.9H1208.0V793.4H1196.5zM1506.2 781.9H1517.7V793.4H1506.2zM909.8 793.4H921.2V804.8H909.8zM1208.0 793.4H1219.4V804.8H1208.0zM1483.2 793.4H1494.7V804.8H1483.2zM909.8 804.8H932.7V816.3H909.8zM1219.4 804.8H1230.9V816.3H1219.4zM1494.7 804.8H1506.2V816.3H1494.7zM1357.1 816.3H1368.6V827.8H1357.1zM1471.8 816.3H1483.2V827.8H1471.8zM818.0 827.8H829.5V839.2H818.0zM852.4 827.8H863.9V839.2H852.4zM955.6 827.8H967.1V839.2H955.6zM1425.9 827.8H1437.4V839.2H1425.9zM1460.3 827.8H1471.8V839.2H1460.3zM829.5 839.2H840.9V850.7H829.5zM852.4 839.2H875.3V850.7H852.4zM1265.3 839.2H1276.8V850.7H1265.3zM1288.3 839.2H1299.7V850.7H1288.3zM1403.0 839.2H1425.9V850.7H1403.0zM1471.8 839.2H1483.2V850.7H1471.8zM772.1 850.7H783.6V862.2H772.1zM886.8 850.7H932.7V862.2H886.8zM1035.9 850.7H1047.4V862.2H1035.9zM1070.3 850.7H1081.8V862.2H1070.3zM1127.7 850.7H1139.2V862.2H1127.7zM863.9 873.7H875.3V885.1H863.9zM1471.8 873.7H1483.2V885.1H1471.8zM760.6 885.1H772.1V896.6H760.6zM829.5 885.1H840.9V896.6H829.5zM875.3 885.1H886.8V896.6H875.3zM1127.7 885.1H1139.2V896.6H1127.7zM783.6 896.6H795.1V908.1H783.6zM829.5 896.6H852.4V908.1H829.5zM932.7 896.6H955.6V908.1H932.7zM1058.9 896.6H1070.3V908.1H1058.9zM737.7 908.1H749.2V919.5H737.7zM772.1 908.1H795.1V919.5H772.1zM978.6 908.1H990.0V919.5H978.6zM1013.0 908.1H1024.5V919.5H1013.0zM1070.3 908.1H1081.8V919.5H1070.3zM1093.3 908.1H1104.7V919.5H1093.3zM955.6 919.5H967.1V931.0H955.6zM967.1 931.0H978.6V942.5H967.1zM1058.9 931.0H1070.3V942.5H1058.9zM1093.3 931.0H1104.7V942.5H1093.3zM1116.2 931.0H1127.7V942.5H1116.2zM1838.8 931.0H1861.8V942.5H1838.8zM955.6 942.5H967.1V953.9H955.6zM1013.0 942.5H1024.5V953.9H1013.0zM1035.9 942.5H1070.3V953.9H1035.9zM1104.7 942.5H1116.2V953.9H1104.7zM1838.8 942.5H1861.8V953.9H1838.8zM749.2 953.9H760.6V965.4H749.2zM944.2 953.9H967.1V965.4H944.2zM1013.0 953.9H1024.5V965.4H1013.0zM1804.4 953.9H1815.9V965.4H1804.4zM1827.4 953.9H1838.8V965.4H1827.4zM749.2 965.4H760.6V976.9H749.2zM955.6 965.4H978.6V976.9H955.6zM1804.4 965.4H1827.4V976.9H1804.4zM783.6 976.9H806.5V988.4H783.6zM829.5 976.9H840.9V988.4H829.5zM955.6 976.9H990.0V988.4H955.6zM1001.5 976.9H1013.0V988.4H1001.5zM1047.4 976.9H1058.9V988.4H1047.4zM1781.5 976.9H1815.9V988.4H1781.5zM783.6 988.4H795.1V999.8H783.6zM967.1 988.4H1001.5V999.8H967.1zM886.8 999.8H898.3V1011.3H886.8zM990.0 999.8H1001.5V1011.3H990.0zM737.7 1011.3H749.2V1022.8H737.7zM783.6 1011.3H795.1V1022.8H783.6zM967.1 1022.8H978.6V1034.2H967.1zM1208.0 1022.8H1219.4V1034.2H1208.0zM760.6 1034.2H772.1V1045.7H760.6zM967.1 1034.2H978.6V1045.7H967.1zM955.6 1045.7H967.1V1057.2H955.6zM1724.1 1045.7H1735.6V1057.2H1724.1zM818.0 1057.2H840.9V1068.6H818.0zM760.6 1068.6H783.6V1080.1H760.6zM806.5 1068.6H818.0V1080.1H806.5zM1735.6 1068.6H1747.1V1080.1H1735.6zM1770.0 1068.6H1781.5V1080.1H1770.0zM795.1 1080.1H806.5V1091.6H795.1zM840.9 1091.6H852.4V1103.0H840.9zM1781.5 1091.6H1804.4V1103.0H1781.5zM1735.6 1103.0H1747.1V1114.5H1735.6zM1712.7 1114.5H1724.1V1126.0H1712.7zM1770.0 1114.5H1781.5V1126.0H1770.0zM1770.0 1126.0H1781.5V1137.5H1770.0zM1655.3 1137.5H1678.2V1148.9H1655.3zM1758.5 1160.4H1770.0V1171.9H1758.5zM1804.4 1171.9H1815.9V1183.3H1804.4zM1735.6 1183.3H1747.1V1194.8H1735.6zM1609.4 1194.8H1620.9V1206.3H1609.4zM1792.9 1194.8H1804.4V1206.3H1792.9zM1747.1 1206.3H1758.5V1217.8H1747.1zM1850.3 1206.3H1861.8V1217.8H1850.3zM1758.5 1217.8H1770.0V1229.2H1758.5zM1850.3 1217.8H1861.8V1229.2H1850.3zM1850.3 1229.2H1861.8V1240.7H1850.3zM1781.5 1240.7H1827.4V1252.2H1781.5z"/><path fill="#2c718e" d="M1403.0 380.4H1414.4V391.9H1403.0zM1403.0 391.9H1414.4V403.4H1403.0zM1334.1 426.3H1345.6V437.8H1334.1zM1334.1 437.8H1345.6V449.3H1334.1zM1598.0 437.8H1609.4V449.3H1598.0zM1334.1 449.3H1345.6V460.7H1334.1zM1322.7 460.7H1345.6V472.2H1322.7zM1311.2 472.2H1322.7V483.7H1311.2zM1334.1 472.2H1345.6V483.7H1334.1zM1276.8 483.7H1288.3V495.1H1276.8zM1334.1 483.7H1345.6V495.1H1334.1zM1345.6 495.1H1357.1V506.6H1345.6zM1655.3 495.1H1666.8V506.6H1655.3zM1345.6 506.6H1357.1V518.1H1345.6zM1380.0 518.1H1391.5V529.6H1380.0zM1460.3 529.6H1471.8V541.0H1460.3zM1678.2 529.6H1701.2V541.0H1678.2zM1253.8 541.0H1265.3V552.5H1253.8zM1425.9 541.0H1471.8V552.5H1425.9zM1666.8 541.0H1678.2V552.5H1666.8zM1483.2 552.5H1494.7V564.0H1483.2zM1380.0 564.0H1391.5V575.4H1380.0zM1483.2 564.0H1494.7V575.4H1483.2zM1127.7 575.4H1139.2V586.9H1127.7zM1781.5 575.4H1815.9V586.9H1781.5zM1058.9 586.9H1070.3V598.4H1058.9zM1483.2 586.9H1494.7V598.4H1483.2zM1047.4 598.4H1058.9V609.8H1047.4zM1368.6 598.4H1380.0V609.8H1368.6zM1701.2 598.4H1712.7V609.8H1701.2zM1047.4 609.8H1058.9V621.3H1047.4zM1081.8 609.8H1093.3V621.3H1081.8zM1322.7 609.8H1345.6V621.3H1322.7zM1494.7 609.8H1529.1V621.3H1494.7zM1678.2 609.8H1689.7V621.3H1678.2zM1712.7 609.8H1724.1V621.3H1712.7zM1081.8 621.3H1093.3V632.8H1081.8zM1299.7 621.3H1311.2V632.8H1299.7zM1334.1 621.3H1345.6V632.8H1334.1zM1552.1 621.3H1563.5V632.8H1552.1zM1586.5 621.3H1598.0V632.8H1586.5zM1609.4 621.3H1620.9V632.8H1609.4zM1104.7 632.8H1116.2V644.2H1104.7zM1196.5 632.8H1219.4V644.2H1196.5zM1448.8 632.8H1483.2V644.2H1448.8zM1448.8 644.2H1460.3V655.7H1448.8zM886.8 655.7H898.3V667.2H886.8zM978.6 655.7H990.0V667.2H978.6zM1643.8 655.7H1655.3V667.2H1643.8zM852.4 667.2H875.3V678.7H852.4zM1127.7 667.2H1139.2V678.7H1127.7zM1632.4 667.2H1643.8V678.7H1632.4zM863.9 678.7H875.3V690.1H863.9zM898.3 678.7H909.8V690.1H898.3zM1150.6 678.7H1162.1V690.1H1150.6zM1276.8 678.7H1288.3V690.1H1276.8zM1047.4 690.1H1058.9V701.6H1047.4zM1093.3 690.1H1104.7V701.6H1093.3zM1150.6 690.1H1162.1V701.6H1150.6zM1253.8 690.1H1265.3V701.6H1253.8zM1058.9 701.6H1081.8V713.1H1058.9zM1219.4 701.6H1230.9V713.1H1219.4zM1242.4 701.6H1265.3V713.1H1242.4zM1529.1 701.6H1552.1V713.1H1529.1zM1001.5 713.1H1047.4V724.5H1001.5zM1196.5 713.1H1208.0V724.5H1196.5zM1219.4 713.1H1230.9V724.5H1219.4zM1253.8 713.1H1265.3V724.5H1253.8zM1058.9 724.5H1081.8V736.0H1058.9zM1208.0 724.5H1230.9V736.0H1208.0zM1529.1 724.5H1540.6V736.0H1529.1zM978.6 736.0H990.0V747.5H978.6zM1035.9 736.0H1047.4V747.5H1035.9zM1093.3 736.0H1104.7V747.5H1093.3zM1552.1 736.0H1563.5V747.5H1552.1zM967.1 747.5H978.6V759.0H967.1zM1001.5 747.5H1013.0V759.0H1001.5zM1196.5 747.5H1208.0V759.0H1196.5zM1540.6 747.5H1563.5V759.0H1540.6zM955.6 759.0H978.6V770.4H955.6zM1024.5 759.0H1035.9V770.4H1024.5zM1196.5 759.0H1208.0V770.4H1196.5zM1529.1 759.0H1540.6V770.4H1529.1zM978.6 770.4H990.0V781.9H978.6zM1013.0 770.4H1024.5V781.9H1013.0zM1253.8 770.4H1265.3V781.9H1253.8zM955.6 781.9H978.6V793.4H955.6zM1494.7 781.9H1506.2V793.4H1494.7zM1196.5 793.4H1208.0V804.8H1196.5zM1334.1 804.8H1345.6V816.3H1334.1zM1357.1 804.8H1368.6V816.3H1357.1zM932.7 816.3H944.2V827.8H932.7zM955.6 816.3H967.1V827.8H955.6zM1081.8 816.3H1093.3V827.8H1081.8zM1460.3 816.3H1471.8V827.8H1460.3zM840.9 827.8H852.4V839.2H840.9zM1139.2 827.8H1162.1V839.2H1139.2zM1185.0 827.8H1196.5V839.2H1185.0zM1265.3 827.8H1276.8V839.2H1265.3zM1403.0 827.8H1425.9V839.2H1403.0zM1437.4 827.8H1460.3V839.2H1437.4zM840.9 839.2H852.4V850.7H840.9zM921.2 839.2H932.7V850.7H921.2zM1081.8 839.2H1093.3V850.7H1081.8zM1139.2 839.2H1162.1V850.7H1139.2zM1242.4 839.2H1265.3V850.7H1242.4zM1276.8 839.2H1288.3V850.7H1276.8zM1460.3 839.2H1471.8V850.7H1460.3zM783.6 850.7H795.1V862.2H783.6zM932.7 850.7H944.2V862.2H932.7zM978.6 850.7H990.0V862.2H978.6zM1208.0 850.7H1219.4V862.2H1208.0zM1460.3 850.7H1471.8V862.2H1460.3zM783.6 862.2H795.1V873.7H783.6zM875.3 862.2H909.8V873.7H875.3zM978.6 862.2H990.0V873.7H978.6zM1116.2 862.2H1127.7V873.7H1116.2zM1208.0 862.2H1219.4V873.7H1208.0zM1460.3 862.2H1471.8V873.7H1460.3zM760.6 873.7H772.1V885.1H760.6zM875.3 873.7H909.8V885.1H875.3zM1208.0 873.7H1230.9V885.1H1208.0zM783.6 885.1H795.1V896.6H783.6zM932.7 885.1H955.6V896.6H932.7zM1013.0 885.1H1024.5V896.6H1013.0zM1013.0 896.6H1024.5V908.1H1013.0zM1035.9 896.6H1058.9V908.1H1035.9zM1070.3 896.6H1081.8V908.1H1070.3zM1093.3 896.6H1104.7V908.1H1093.3zM749.2 908.1H760.6V919.5H749.2zM1058.9 908.1H1070.3V919.5H1058.9zM1081.8 908.1H1093.3V919.5H1081.8zM978.6 919.5H990.0V931.0H978.6zM1047.4 919.5H1058.9V931.0H1047.4zM749.2 931.0H760.6V942.5H749.2zM978.6 931.0H990.0V942.5H978.6zM1104.7 931.0H1116.2V942.5H1104.7zM737.7 942.5H749.2V953.9H737.7zM967.1 942.5H990.0V953.9H967.1zM967.1 953.9H1013.0V965.4H967.1zM1024.5 965.4H1035.9V976.9H1024.5zM1792.9 965.4H1804.4V976.9H1792.9zM760.6 976.9H772.1V988.4H760.6zM990.0 976.9H1001.5V988.4H990.0zM1035.9 976.9H1047.4V988.4H1035.9zM1770.0 976.9H1781.5V988.4H1770.0zM749.2 988.4H760.6V999.8H749.2zM1035.9 988.4H1047.4V999.8H1035.9zM1770.0 988.4H1781.5V999.8H1770.0zM772.1 999.8H783.6V1011.3H772.1zM737.7 1022.8H749.2V1034.2H737.7zM944.2 1022.8H955.6V1034.2H944.2zM749.2 1034.2H760.6V1045.7H749.2zM783.6 1034.2H795.1V1045.7H783.6zM818.0 1045.7H829.5V1057.2H818.0zM760.6 1057.2H772.1V1068.6H760.6zM783.6 1068.6H795.1V1080.1H783.6zM806.5 1080.1H829.5V1091.6H806.5zM1770.0 1091.6H1781.5V1103.0H1770.0zM818.0 1103.0H829.5V1114.5H818.0zM1747.1 1103.0H1758.5V1114.5H1747.1zM1747.1 1114.5H1758.5V1126.0H1747.1zM829.5 1126.0H840.9V1137.5H829.5zM1758.5 1126.0H1770.0V1137.5H1758.5zM840.9 1137.5H852.4V1148.9H840.9zM1758.5 1137.5H1770.0V1148.9H1758.5zM783.6 1148.9H795.1V1160.4H783.6zM1758.5 1148.9H1770.0V1160.4H1758.5zM1747.1 1171.9H1781.5V1183.3H1747.1zM1781.5 1183.3H1792.9V1194.8H1781.5zM1735.6 1194.8H1747.1V1206.3H1735.6z"/><path fill="#23898e" d="M1586.5 437.8H1598.0V449.3H1586.5zM1299.7 472.2H1311.2V483.7H1299.7zM1311.2 506.6H1322.7V518.1H1311.2zM1345.6 518.1H1357.1V529.6H1345.6zM1666.8 518.1H1678.2V529.6H1666.8zM1758.5 518.1H1781.5V529.6H1758.5zM1345.6 529.6H1357.1V541.0H1345.6zM1414.4 541.0H1425.9V552.5H1414.4zM1471.8 541.0H1483.2V552.5H1471.8zM1357.1 552.5H1368.6V564.0H1357.1zM1425.9 552.5H1448.8V564.0H1425.9zM1471.8 564.0H1483.2V575.4H1471.8zM1368.6 575.4H1391.5V586.9H1368.6zM1471.8 575.4H1483.2V586.9H1471.8zM1689.7 575.4H1701.2V586.9H1689.7zM1770.0 575.4H1781.5V586.9H1770.0zM1081.8 586.9H1093.3V598.4H1081.8zM1471.8 586.9H1483.2V598.4H1471.8zM1804.4 586.9H1815.9V598.4H1804.4zM1081.8 598.4H1093.3V609.8H1081.8zM1334.1 598.4H1345.6V609.8H1334.1zM1483.2 598.4H1494.7V609.8H1483.2zM1747.1 598.4H1758.5V609.8H1747.1zM1483.2 609.8H1494.7V621.3H1483.2zM1701.2 609.8H1712.7V621.3H1701.2zM1047.4 621.3H1058.9V632.8H1047.4zM1104.7 621.3H1116.2V632.8H1104.7zM1598.0 621.3H1609.4V632.8H1598.0zM1666.8 621.3H1689.7V632.8H1666.8zM1035.9 632.8H1047.4V644.2H1035.9zM1253.8 632.8H1265.3V644.2H1253.8zM1334.1 632.8H1345.6V644.2H1334.1zM1666.8 632.8H1678.2V644.2H1666.8zM875.3 655.7H886.8V667.2H875.3zM990.0 655.7H1001.5V667.2H990.0zM1116.2 655.7H1127.7V667.2H1116.2zM1288.3 655.7H1299.7V667.2H1288.3zM1448.8 655.7H1460.3V667.2H1448.8zM886.8 667.2H898.3V678.7H886.8zM1081.8 667.2H1093.3V678.7H1081.8zM1242.4 667.2H1253.8V678.7H1242.4zM1609.4 667.2H1632.4V678.7H1609.4zM1139.2 678.7H1150.6V690.1H1139.2zM1185.0 678.7H1196.5V690.1H1185.0zM1104.7 690.1H1116.2V701.6H1104.7zM1230.9 690.1H1242.4V701.6H1230.9zM1276.8 690.1H1288.3V701.6H1276.8zM1540.6 690.1H1552.1V701.6H1540.6zM1586.5 690.1H1598.0V701.6H1586.5zM1093.3 701.6H1116.2V713.1H1093.3zM1150.6 701.6H1162.1V713.1H1150.6zM1265.3 701.6H1276.8V713.1H1265.3zM1081.8 713.1H1093.3V724.5H1081.8zM1208.0 713.1H1219.4V724.5H1208.0zM1024.5 724.5H1035.9V736.0H1024.5zM1081.8 724.5H1093.3V736.0H1081.8zM1196.5 724.5H1208.0V736.0H1196.5zM1230.9 724.5H1265.3V736.0H1230.9zM1173.6 736.0H1185.0V747.5H1173.6zM1208.0 736.0H1230.9V747.5H1208.0zM1563.5 736.0H1575.0V747.5H1563.5zM955.6 747.5H967.1V759.0H955.6zM990.0 747.5H1001.5V759.0H990.0zM1208.0 747.5H1219.4V759.0H1208.0zM1276.8 747.5H1288.3V759.0H1276.8zM1013.0 759.0H1024.5V770.4H1013.0zM1070.3 759.0H1093.3V770.4H1070.3zM1185.0 770.4H1196.5V781.9H1185.0zM1517.7 770.4H1529.1V781.9H1517.7zM1185.0 781.9H1196.5V793.4H1185.0zM1242.4 781.9H1253.8V793.4H1242.4zM932.7 793.4H944.2V804.8H932.7zM1185.0 793.4H1196.5V804.8H1185.0zM932.7 804.8H944.2V816.3H932.7zM1208.0 804.8H1219.4V816.3H1208.0zM1230.9 804.8H1242.4V816.3H1230.9zM1483.2 804.8H1494.7V816.3H1483.2zM944.2 816.3H955.6V827.8H944.2zM1162.1 816.3H1173.6V827.8H1162.1zM1265.3 816.3H1288.3V827.8H1265.3zM944.2 827.8H955.6V839.2H944.2zM1196.5 827.8H1208.0V839.2H1196.5zM955.6 839.2H967.1V850.7H955.6zM1208.0 839.2H1219.4V850.7H1208.0zM1047.4 850.7H1058.9V862.2H1047.4zM772.1 862.2H783.6V873.7H772.1zM1013.0 862.2H1024.5V873.7H1013.0zM1070.3 862.2H1081.8V873.7H1070.3zM1219.4 862.2H1230.9V873.7H1219.4zM1024.5 873.7H1047.4V885.1H1024.5zM886.8 885.1H898.3V896.6H886.8zM909.8 885.1H932.7V896.6H909.8zM955.6 885.1H967.1V896.6H955.6zM1047.4 885.1H1081.8V896.6H1047.4zM1104.7 885.1H1116.2V896.6H1104.7zM978.6 896.6H990.0V908.1H978.6zM760.6 908.1H772.1V919.5H760.6zM967.1 908.1H978.6V919.5H967.1zM1024.5 908.1H1035.9V919.5H1024.5zM760.6 919.5H772.1V931.0H760.6zM1104.7 919.5H1116.2V931.0H1104.7zM990.0 931.0H1001.5V942.5H990.0zM1024.5 931.0H1035.9V942.5H1024.5zM990.0 942.5H1001.5V953.9H990.0zM1047.4 953.9H1058.9V965.4H1047.4zM978.6 965.4H1013.0V976.9H978.6zM1047.4 965.4H1058.9V976.9H1047.4zM806.5 976.9H829.5V988.4H806.5zM749.2 1011.3H760.6V1022.8H749.2zM955.6 1022.8H967.1V1034.2H955.6zM955.6 1034.2H967.1V1045.7H955.6zM772.1 1057.2H783.6V1068.6H772.1zM1747.1 1057.2H1770.0V1068.6H1747.1zM737.7 1068.6H760.6V1080.1H737.7zM1724.1 1080.1H1735.6V1091.6H1724.1zM1712.7 1091.6H1735.6V1103.0H1712.7zM1758.5 1091.6H1770.0V1103.0H1758.5zM852.4 1114.5H863.9V1126.0H852.4zM1747.1 1183.3H1758.5V1194.8H1747.1zM1758.5 1206.3H1792.9V1217.8H1758.5z"/><path fill="#22a785" d="M1322.7 472.2H1334.1V483.7H1322.7zM1299.7 495.1H1311.2V506.6H1299.7zM1380.0 541.0H1391.5V552.5H1380.0zM1815.9 541.0H1827.4V552.5H1815.9zM1368.6 564.0H1380.0V575.4H1368.6zM1425.9 564.0H1437.4V575.4H1425.9zM1460.3 564.0H1471.8V575.4H1460.3zM1804.4 564.0H1815.9V575.4H1804.4zM1345.6 575.4H1357.1V586.9H1345.6zM1758.5 575.4H1770.0V586.9H1758.5zM1403.0 598.4H1414.4V609.8H1403.0zM1471.8 598.4H1483.2V609.8H1471.8zM1712.7 598.4H1724.1V609.8H1712.7zM1735.6 609.8H1747.1V621.3H1735.6zM1230.9 621.3H1253.8V632.8H1230.9zM1311.2 621.3H1334.1V632.8H1311.2zM1230.9 632.8H1242.4V644.2H1230.9zM1655.3 632.8H1666.8V644.2H1655.3zM1093.3 644.2H1104.7V655.7H1093.3zM1208.0 644.2H1219.4V655.7H1208.0zM1230.9 644.2H1242.4V655.7H1230.9zM1299.7 644.2H1311.2V655.7H1299.7zM1655.3 644.2H1666.8V655.7H1655.3zM1081.8 655.7H1093.3V667.2H1081.8zM1196.5 655.7H1208.0V667.2H1196.5zM1299.7 655.7H1311.2V667.2H1299.7zM1598.0 667.2H1609.4V678.7H1598.0zM1104.7 678.7H1116.2V690.1H1104.7zM1242.4 678.7H1253.8V690.1H1242.4zM1391.5 678.7H1403.0V690.1H1391.5zM1586.5 678.7H1598.0V690.1H1586.5zM1185.0 690.1H1230.9V701.6H1185.0zM1242.4 690.1H1253.8V701.6H1242.4zM1047.4 701.6H1058.9V713.1H1047.4zM1116.2 701.6H1127.7V713.1H1116.2zM1563.5 701.6H1575.0V713.1H1563.5zM1047.4 713.1H1070.3V724.5H1047.4zM1517.7 713.1H1529.1V724.5H1517.7zM990.0 724.5H1024.5V736.0H990.0zM1162.1 724.5H1173.6V736.0H1162.1zM1185.0 724.5H1196.5V736.0H1185.0zM1265.3 724.5H1276.8V736.0H1265.3zM1013.0 736.0H1035.9V747.5H1013.0zM1024.5 747.5H1035.9V759.0H1024.5zM1093.3 747.5H1104.7V759.0H1093.3zM1024.5 770.4H1035.9V781.9H1024.5zM978.6 781.9H1013.0V793.4H978.6zM1288.3 781.9H1299.7V793.4H1288.3zM1357.1 781.9H1391.5V793.4H1357.1zM1483.2 781.9H1494.7V793.4H1483.2zM944.2 793.4H955.6V804.8H944.2zM1242.4 793.4H1253.8V804.8H1242.4zM1334.1 793.4H1368.6V804.8H1334.1zM1471.8 793.4H1483.2V804.8H1471.8zM1322.7 804.8H1334.1V816.3H1322.7zM1139.2 816.3H1162.1V827.8H1139.2zM1173.6 816.3H1185.0V827.8H1173.6zM1208.0 816.3H1219.4V827.8H1208.0zM1368.6 816.3H1380.0V827.8H1368.6zM1414.4 816.3H1425.9V827.8H1414.4zM1448.8 816.3H1460.3V827.8H1448.8zM829.5 827.8H840.9V839.2H829.5zM932.7 827.8H944.2V839.2H932.7zM1081.8 827.8H1093.3V839.2H1081.8zM1173.6 827.8H1185.0V839.2H1173.6zM1242.4 827.8H1253.8V839.2H1242.4zM967.1 839.2H978.6V850.7H967.1zM1035.9 839.2H1047.4V850.7H1035.9zM1070.3 839.2H1081.8V850.7H1070.3zM1093.3 850.7H1104.7V862.2H1093.3zM783.6 873.7H795.1V885.1H783.6zM944.2 873.7H955.6V885.1H944.2zM967.1 873.7H978.6V885.1H967.1zM1013.0 873.7H1024.5V885.1H1013.0zM772.1 885.1H783.6V896.6H772.1zM898.3 885.1H909.8V896.6H898.3zM1081.8 885.1H1093.3V896.6H1081.8zM1081.8 896.6H1093.3V908.1H1081.8zM1116.2 896.6H1127.7V908.1H1116.2zM1024.5 942.5H1035.9V953.9H1024.5zM737.7 953.9H749.2V965.4H737.7zM772.1 1011.3H783.6V1022.8H772.1zM760.6 1045.7H772.1V1057.2H760.6zM795.1 1057.2H806.5V1068.6H795.1zM795.1 1068.6H806.5V1080.1H795.1zM1770.0 1080.1H1781.5V1091.6H1770.0zM852.4 1126.0H863.9V1137.5H852.4z"/><path fill="#4ec36b" d="M1299.7 483.7H1311.2V495.1H1299.7zM1288.3 495.1H1299.7V506.6H1288.3zM1334.1 518.1H1345.6V529.6H1334.1zM1666.8 529.6H1678.2V541.0H1666.8zM1781.5 529.6H1792.9V541.0H1781.5zM1368.6 552.5H1380.0V564.0H1368.6zM1448.8 552.5H1460.3V564.0H1448.8zM1678.2 552.5H1689.7V564.0H1678.2zM1815.9 552.5H1827.4V564.0H1815.9zM1689.7 564.0H1701.2V575.4H1689.7zM1712.7 586.9H1724.1V598.4H1712.7zM1070.3 598.4H1081.8V609.8H1070.3zM1689.7 609.8H1701.2V621.3H1689.7zM1219.4 632.8H1230.9V644.2H1219.4zM1437.4 644.2H1448.8V655.7H1437.4zM1230.9 655.7H1242.4V667.2H1230.9zM1437.4 655.7H1448.8V667.2H1437.4zM875.3 667.2H886.8V678.7H875.3zM1093.3 667.2H1104.7V678.7H1093.3zM1299.7 667.2H1311.2V678.7H1299.7zM1437.4 667.2H1460.3V678.7H1437.4zM1219.4 678.7H1242.4V690.1H1219.4zM1437.4 678.7H1460.3V690.1H1437.4zM1139.2 690.1H1150.6V701.6H1139.2zM1288.3 690.1H1299.7V701.6H1288.3zM1552.1 701.6H1563.5V713.1H1552.1zM1093.3 713.1H1104.7V724.5H1093.3zM1425.9 713.1H1437.4V724.5H1425.9zM1001.5 736.0H1013.0V747.5H1001.5zM1047.4 736.0H1070.3V747.5H1047.4zM1196.5 736.0H1208.0V747.5H1196.5zM1540.6 736.0H1552.1V747.5H1540.6zM1035.9 747.5H1047.4V759.0H1035.9zM1185.0 759.0H1196.5V770.4H1185.0zM1104.7 770.4H1116.2V781.9H1104.7zM955.6 793.4H967.1V804.8H955.6zM978.6 793.4H990.0V804.8H978.6zM1265.3 793.4H1276.8V804.8H1265.3zM1391.5 793.4H1403.0V804.8H1391.5zM955.6 804.8H967.1V816.3H955.6zM1081.8 804.8H1104.7V816.3H1081.8zM1242.4 804.8H1253.8V816.3H1242.4zM1299.7 804.8H1322.7V816.3H1299.7zM1368.6 804.8H1380.0V816.3H1368.6zM1070.3 816.3H1081.8V827.8H1070.3zM1093.3 816.3H1104.7V827.8H1093.3zM1219.4 816.3H1230.9V827.8H1219.4zM1242.4 816.3H1253.8V827.8H1242.4zM1425.9 816.3H1437.4V827.8H1425.9zM967.1 827.8H978.6V839.2H967.1zM1253.8 827.8H1265.3V839.2H1253.8zM1024.5 850.7H1035.9V862.2H1024.5zM932.7 862.2H944.2V873.7H932.7zM932.7 873.7H944.2V885.1H932.7zM1081.8 873.7H1093.3V885.1H1081.8zM967.1 885.1H978.6V896.6H967.1zM967.1 896.6H978.6V908.1H967.1zM1104.7 896.6H1116.2V908.1H1104.7zM990.0 919.5H1001.5V931.0H990.0zM1035.9 919.5H1047.4V931.0H1035.9zM1024.5 953.9H1035.9V965.4H1024.5zM1035.9 965.4H1047.4V976.9H1035.9zM772.1 1045.7H795.1V1057.2H772.1zM818.0 1091.6H829.5V1103.0H818.0zM1758.5 1114.5H1770.0V1126.0H1758.5z"/><path fill="#a2da37" d="M1288.3 483.7H1299.7V495.1H1288.3zM1311.2 483.7H1322.7V495.1H1311.2zM1334.1 506.6H1345.6V518.1H1334.1zM1724.1 518.1H1735.6V529.6H1724.1zM1345.6 541.0H1357.1V552.5H1345.6zM1678.2 541.0H1701.2V552.5H1678.2zM1414.4 552.5H1425.9V564.0H1414.4zM1471.8 552.5H1483.2V564.0H1471.8zM1345.6 564.0H1357.1V575.4H1345.6zM1792.9 564.0H1804.4V575.4H1792.9zM1460.3 575.4H1471.8V586.9H1460.3zM1070.3 586.9H1081.8V598.4H1070.3zM1380.0 586.9H1391.5V598.4H1380.0zM1391.5 598.4H1403.0V609.8H1391.5zM1460.3 598.4H1471.8V609.8H1460.3zM1735.6 598.4H1747.1V609.8H1735.6zM1724.1 609.8H1735.6V621.3H1724.1zM1471.8 621.3H1483.2V632.8H1471.8zM1242.4 632.8H1253.8V644.2H1242.4zM1311.2 632.8H1334.1V644.2H1311.2zM1563.5 632.8H1598.0V644.2H1563.5zM1609.4 632.8H1620.9V644.2H1609.4zM1104.7 644.2H1116.2V655.7H1104.7zM1219.4 644.2H1230.9V655.7H1219.4zM1345.6 644.2H1357.1V655.7H1345.6zM1632.4 655.7H1643.8V667.2H1632.4zM1127.7 678.7H1139.2V690.1H1127.7zM1116.2 690.1H1127.7V701.6H1116.2zM1425.9 690.1H1437.4V701.6H1425.9zM1070.3 713.1H1081.8V724.5H1070.3zM1150.6 713.1H1162.1V724.5H1150.6zM1093.3 724.5H1104.7V736.0H1093.3zM1162.1 736.0H1173.6V747.5H1162.1zM1185.0 747.5H1196.5V759.0H1185.0zM1517.7 747.5H1540.6V759.0H1517.7zM1173.6 759.0H1185.0V770.4H1173.6zM1276.8 759.0H1288.3V770.4H1276.8zM1517.7 759.0H1529.1V770.4H1517.7zM1116.2 770.4H1127.7V781.9H1116.2zM1173.6 770.4H1185.0V781.9H1173.6zM1506.2 770.4H1517.7V781.9H1506.2zM1013.0 781.9H1024.5V793.4H1013.0zM1276.8 781.9H1288.3V793.4H1276.8zM1391.5 781.9H1403.0V793.4H1391.5zM1253.8 793.4H1265.3V804.8H1253.8zM1403.0 793.4H1414.4V804.8H1403.0zM944.2 804.8H955.6V816.3H944.2zM1058.9 804.8H1070.3V816.3H1058.9zM1162.1 804.8H1173.6V816.3H1162.1zM1253.8 804.8H1276.8V816.3H1253.8zM1380.0 804.8H1391.5V816.3H1380.0zM967.1 816.3H990.0V827.8H967.1zM1035.9 816.3H1047.4V827.8H1035.9zM1196.5 816.3H1208.0V827.8H1196.5zM1253.8 816.3H1265.3V827.8H1253.8zM1380.0 816.3H1391.5V827.8H1380.0zM1437.4 816.3H1448.8V827.8H1437.4zM1024.5 827.8H1035.9V839.2H1024.5zM1070.3 827.8H1081.8V839.2H1070.3zM1093.3 827.8H1104.7V839.2H1093.3zM932.7 839.2H944.2V850.7H932.7zM1093.3 839.2H1104.7V850.7H1093.3zM1127.7 839.2H1139.2V850.7H1127.7zM955.6 850.7H967.1V862.2H955.6zM967.1 862.2H978.6V873.7H967.1zM1093.3 862.2H1104.7V873.7H1093.3zM955.6 873.7H967.1V885.1H955.6zM978.6 873.7H990.0V885.1H978.6zM1104.7 873.7H1116.2V885.1H1104.7zM990.0 908.1H1013.0V919.5H990.0zM1104.7 908.1H1127.7V919.5H1104.7zM749.2 919.5H760.6V931.0H749.2zM1024.5 919.5H1035.9V931.0H1024.5zM1001.5 942.5H1013.0V953.9H1001.5zM1035.9 953.9H1047.4V965.4H1035.9zM737.7 976.9H760.6V988.4H737.7zM737.7 999.8H749.2V1011.3H737.7zM760.6 999.8H772.1V1011.3H760.6zM749.2 1057.2H760.6V1068.6H749.2zM1747.1 1068.6H1770.0V1080.1H1747.1zM829.5 1091.6H840.9V1103.0H829.5zM1735.6 1091.6H1747.1V1103.0H1735.6zM1747.1 1194.8H1758.5V1206.3H1747.1zM1781.5 1194.8H1792.9V1206.3H1781.5z"/><path fill="#fde725" d="M1322.7 483.7H1334.1V495.1H1322.7zM1311.2 495.1H1345.6V506.6H1311.2zM1322.7 506.6H1334.1V518.1H1322.7zM1712.7 518.1H1724.1V529.6H1712.7zM1701.2 529.6H1781.5V541.0H1701.2zM1391.5 541.0H1414.4V552.5H1391.5zM1701.2 541.0H1815.9V552.5H1701.2zM1345.6 552.5H1357.1V564.0H1345.6zM1380.0 552.5H1414.4V564.0H1380.0zM1460.3 552.5H1471.8V564.0H1460.3zM1689.7 552.5H1815.9V564.0H1689.7zM1357.1 564.0H1368.6V575.4H1357.1zM1391.5 564.0H1425.9V575.4H1391.5zM1437.4 564.0H1460.3V575.4H1437.4zM1701.2 564.0H1792.9V575.4H1701.2zM1357.1 575.4H1368.6V586.9H1357.1zM1391.5 575.4H1460.3V586.9H1391.5zM1701.2 575.4H1758.5V586.9H1701.2zM1391.5 586.9H1471.8V598.4H1391.5zM1724.1 586.9H1735.6V598.4H1724.1zM1380.0 598.4H1391.5V609.8H1380.0zM1414.4 598.4H1460.3V609.8H1414.4zM1724.1 598.4H1735.6V609.8H1724.1zM1345.6 609.8H1483.2V621.3H1345.6zM1747.1 609.8H1758.5V621.3H1747.1zM1345.6 621.3H1471.8V632.8H1345.6zM1483.2 621.3H1552.1V632.8H1483.2zM1345.6 632.8H1448.8V644.2H1345.6zM1483.2 632.8H1563.5V644.2H1483.2zM1598.0 632.8H1609.4V644.2H1598.0zM1620.9 632.8H1655.3V644.2H1620.9zM1311.2 644.2H1345.6V655.7H1311.2zM1357.1 644.2H1437.4V655.7H1357.1zM1471.8 644.2H1655.3V655.7H1471.8zM1093.3 655.7H1116.2V667.2H1093.3zM1208.0 655.7H1230.9V667.2H1208.0zM1311.2 655.7H1437.4V667.2H1311.2zM1460.3 655.7H1632.4V667.2H1460.3zM1104.7 667.2H1127.7V678.7H1104.7zM1196.5 667.2H1242.4V678.7H1196.5zM1311.2 667.2H1437.4V678.7H1311.2zM1460.3 667.2H1598.0V678.7H1460.3zM1116.2 678.7H1127.7V690.1H1116.2zM1196.5 678.7H1219.4V690.1H1196.5zM1299.7 678.7H1391.5V690.1H1299.7zM1403.0 678.7H1437.4V690.1H1403.0zM1460.3 678.7H1586.5V690.1H1460.3zM1127.7 690.1H1139.2V701.6H1127.7zM1299.7 690.1H1425.9V701.6H1299.7zM1437.4 690.1H1540.6V701.6H1437.4zM1552.1 690.1H1586.5V701.6H1552.1zM1127.7 701.6H1150.6V713.1H1127.7zM1276.8 701.6H1529.1V713.1H1276.8zM1104.7 713.1H1150.6V724.5H1104.7zM1265.3 713.1H1425.9V724.5H1265.3zM1437.4 713.1H1517.7V724.5H1437.4zM1104.7 724.5H1162.1V736.0H1104.7zM1276.8 724.5H1529.1V736.0H1276.8zM990.0 736.0H1001.5V747.5H990.0zM1104.7 736.0H1162.1V747.5H1104.7zM1185.0 736.0H1196.5V747.5H1185.0zM1276.8 736.0H1540.6V747.5H1276.8zM1047.4 747.5H1070.3V759.0H1047.4zM1104.7 747.5H1185.0V759.0H1104.7zM1288.3 747.5H1517.7V759.0H1288.3zM1035.9 759.0H1070.3V770.4H1035.9zM1093.3 759.0H1173.6V770.4H1093.3zM1288.3 759.0H1517.7V770.4H1288.3zM1035.9 770.4H1104.7V781.9H1035.9zM1127.7 770.4H1173.6V781.9H1127.7zM1265.3 770.4H1506.2V781.9H1265.3zM1024.5 781.9H1185.0V793.4H1024.5zM1253.8 781.9H1276.8V793.4H1253.8zM1299.7 781.9H1357.1V793.4H1299.7zM1403.0 781.9H1483.2V793.4H1403.0zM967.1 793.4H978.6V804.8H967.1zM990.0 793.4H1185.0V804.8H990.0zM1276.8 793.4H1334.1V804.8H1276.8zM1368.6 793.4H1391.5V804.8H1368.6zM1414.4 793.4H1471.8V804.8H1414.4zM967.1 804.8H1058.9V816.3H967.1zM1070.3 804.8H1081.8V816.3H1070.3zM1104.7 804.8H1162.1V816.3H1104.7zM1173.6 804.8H1208.0V816.3H1173.6zM1276.8 804.8H1299.7V816.3H1276.8zM1391.5 804.8H1483.2V816.3H1391.5zM990.0 816.3H1035.9V827.8H990.0zM1047.4 816.3H1070.3V827.8H1047.4zM1104.7 816.3H1139.2V827.8H1104.7zM1185.0 816.3H1196.5V827.8H1185.0zM1230.9 816.3H1242.4V827.8H1230.9zM1391.5 816.3H1414.4V827.8H1391.5zM978.6 827.8H1024.5V839.2H978.6zM1035.9 827.8H1070.3V839.2H1035.9zM1104.7 827.8H1139.2V839.2H1104.7zM1162.1 827.8H1173.6V839.2H1162.1zM1208.0 827.8H1242.4V839.2H1208.0zM944.2 839.2H955.6V850.7H944.2zM978.6 839.2H1035.9V850.7H978.6zM1047.4 839.2H1070.3V850.7H1047.4zM1104.7 839.2H1127.7V850.7H1104.7zM1219.4 839.2H1242.4V850.7H1219.4zM944.2 850.7H955.6V862.2H944.2zM967.1 850.7H978.6V862.2H967.1zM990.0 850.7H1024.5V862.2H990.0zM1058.9 850.7H1070.3V862.2H1058.9zM1104.7 850.7H1127.7V862.2H1104.7zM1219.4 850.7H1230.9V862.2H1219.4zM909.8 862.2H932.7V873.7H909.8zM944.2 862.2H967.1V873.7H944.2zM990.0 862.2H1013.0V873.7H990.0zM1024.5 862.2H1070.3V873.7H1024.5zM1104.7 862.2H1116.2V873.7H1104.7zM772.1 873.7H783.6V885.1H772.1zM909.8 873.7H932.7V885.1H909.8zM990.0 873.7H1013.0V885.1H990.0zM1047.4 873.7H1081.8V885.1H1047.4zM1093.3 873.7H1104.7V885.1H1093.3zM978.6 885.1H1013.0V896.6H978.6zM1093.3 885.1H1104.7V896.6H1093.3zM990.0 896.6H1013.0V908.1H990.0zM1035.9 908.1H1058.9V919.5H1035.9zM737.7 919.5H749.2V931.0H737.7zM1001.5 919.5H1024.5V931.0H1001.5zM737.7 931.0H749.2V942.5H737.7zM1001.5 931.0H1024.5V942.5H1001.5zM737.7 965.4H749.2V976.9H737.7zM737.7 988.4H749.2V999.8H737.7zM749.2 999.8H760.6V1011.3H749.2zM760.6 1011.3H772.1V1022.8H760.6zM737.7 1034.2H749.2V1045.7H737.7zM737.7 1045.7H760.6V1057.2H737.7zM737.7 1057.2H749.2V1068.6H737.7zM783.6 1057.2H795.1V1068.6H783.6zM1735.6 1080.1H1770.0V1091.6H1735.6zM1747.1 1091.6H1758.5V1103.0H1747.1zM829.5 1103.0H852.4V1114.5H829.5zM829.5 1114.5H852.4V1126.0H829.5zM840.9 1126.0H852.4V1137.5H840.9zM1758.5 1183.3H1781.5V1194.8H1758.5zM1758.5 1194.8H1781.5V1206.3H1758.5z"/><g shape-rendering="auto"><polygon points="786,761 779,755.8 778.3,738.5 784.1,732.1 797,725.7 802.1,714.1 809.8,711.6 821.3,709.6 827.8,703.9 834.2,700 837.3,691.8 859.3,691.8 868.5,669.7 870.4,662.4 877.7,663.3 910.8,663.3 917.2,660.5 929.2,659.6 932.9,649.5 953.1,639.4 977,639.4 982.5,636.6 1010.1,636.6 1021.1,631.1 1029.5,624.6 1042.4,616.3 1060.7,612.7 1067.2,609.9 1095.7,609.9 1104.8,605.3 1119.5,605.3 1120.5,601.7 1108.5,598.9 1143.4,598.9 1150.8,586 1167.3,571.3 1180.2,564.9 1196.7,565.8 1215.1,556.6 1237.1,546.5 1248.1,546.5 1251.8,541 1264.7,533.7 1263.9,530 1263,512.3 1267.6,508.6 1276.9,501.2 1282.4,498.4 1293.5,499.3 1293.5,493.8 1304.5,488.3 1306.4,482.7 1311,474 1316.5,466.1 1428.2,373.8 1445.7,373.8 1458.7,381.2 1464.2,381.2 1476.2,386.7 1493.7,386.7 1501.1,393.2 1512.2,398.7 1517.7,399.7 1521.4,405.2 1532.5,410.7 1534.3,418.1 1539,423.7 1539.9,429.2 1545.4,432 1551,443 1556.5,446.7 1565.7,465.2 1566.6,472.6 1573.1,482.7 1577.7,483.6 1581.4,489.2 1593.4,489.2 1598,489.5 1610.9,498.5 1622,495.7 1632.2,503.1 1653.4,514.2 1658.9,521.6 1665.4,524.3 1675.5,524.3 1701.4,530 1708.3,532.8 1721.2,536.4 1765.3,536.4 1772.6,542.9 1783.7,547.5 1792.9,552.1 1800.2,557.6 1807.6,564.9 1820.4,565.8 1833.3,570.4 1849.8,576.9 1859,576.9 1866.4,581.5 1872.8,588.8 1873.7,598 1870,609 1868.2,618.2 1860.9,621.9 1831.5,621.9 1814,624.7 1803.9,631.1 1792.9,638.5 1783.7,648.6 1770.8,655 1746.9,655 1743.2,659.6 1730.4,667 1717.5,667 1702.8,673.4 1675.2,689.9 1664.2,697.3 1655,703.7 1634.8,715.7 1627.4,723 1616.4,738.6 1598,746.9 1582.9,759 1571.9,771.9 1568.2,776.5 1553.5,786.6 1545.2,795.7 1544.3,801.3 1526,820.5 1513.1,827 1505.7,834.3 1494.7,847.2 1485.5,849.9 1470.8,856.4 1443.3,856.4 1435.9,852.7 1382.7,852.7 1369.8,859.1 1347.7,859.1 1331.2,864.6 1311,864.6 1284.9,876.6 1281.2,882.1 1270.2,889.4 1258.2,899.5 1257.3,906 1250,913.3 1242.6,929.9 1235.3,930.8 1226.1,937.2 1221.5,938.1 1216.9,941.8 1205.9,942.7 1198.5,947.3 1194.9,951.9 1187.5,947.3 1163.6,947.3 1160.9,950.1 1160.9,958.3 1165.5,960.2 1174.7,960.2 1180.2,957.4 1189.3,960.2 1190.3,970.3 1196.7,985 1200,994.2 1195.9,997.3 1156.5,996.3 1137.9,1004.6 1131.7,1017 1125.5,1017 1115.1,1020.1 1106.8,1026.3 1030,1027 1011.7,1021.5 1002.5,1017.4 990.3,1014 969,1003.6 964.4,993 953.7,977.7 941.5,960.9 938.4,953.3 923.2,938 917,935 906,932 897.9,927 892.4,920.8 888.7,911.6 885.1,900.5 855.6,889.5 848.3,882.2 843.7,873 840.9,863.8 831.8,849.1 829.9,839.9 822.6,830.7 820.7,824.3 815.2,818.7 809.7,814.1 807.9,808.6 796.8,782.9 795.7,773.8 788.6,770.6" fill="none" stroke="#33a02c" stroke-width="6.8" stroke-linejoin="round"/><text x="1270" y="921" font-family="Liberation Sans" font-size="29.5" fill="#fff">population:9,744,345</text></g></svg>
</div>
</body></html>
